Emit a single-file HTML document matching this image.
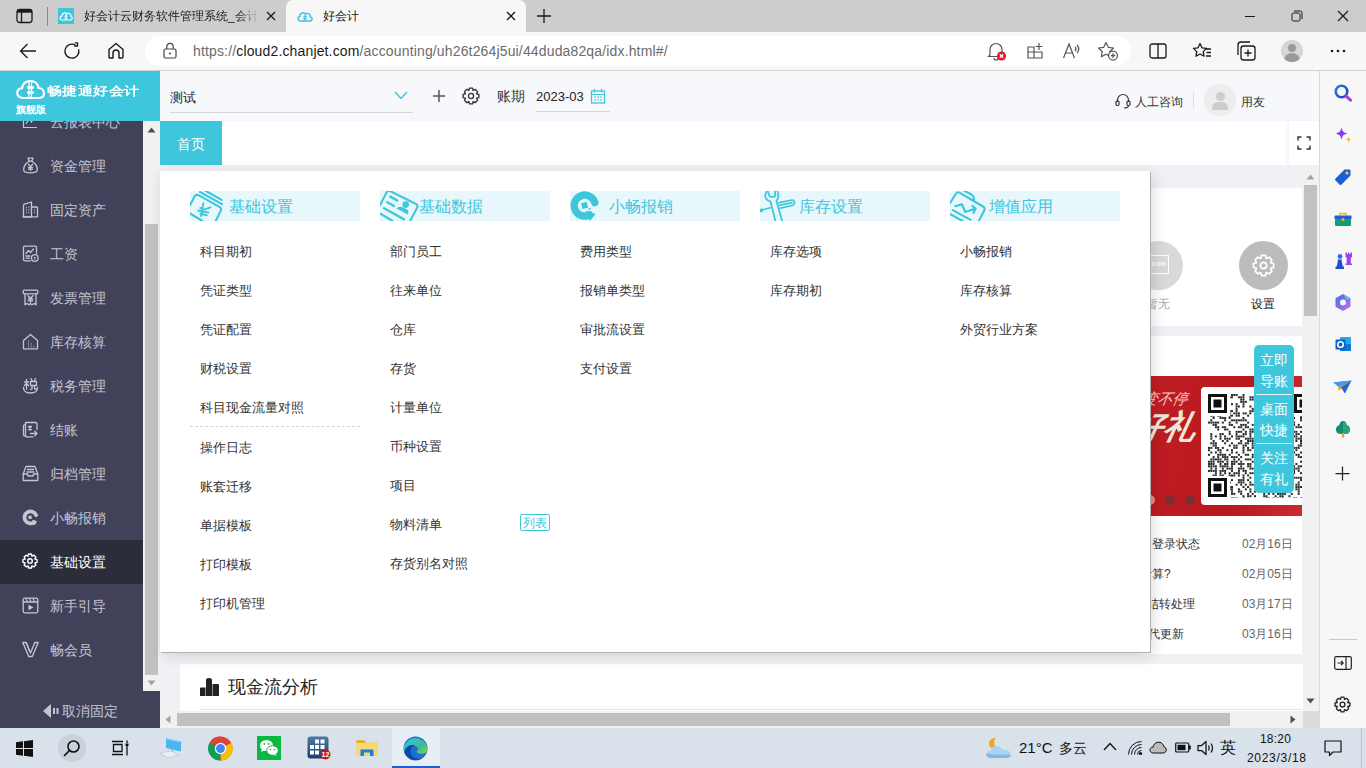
<!DOCTYPE html>
<html><head><meta charset="utf-8">
<style>
*{margin:0;padding:0;box-sizing:border-box}
html,body{width:1366px;height:768px;overflow:hidden;background:#fff;font-family:"Liberation Sans",sans-serif;position:relative}
.a{position:absolute}
svg{display:block}
/* browser chrome */
#tabs{left:0;top:0;width:1366px;height:32px;background:#cdcdcd}
#addr{left:0;top:32px;width:1366px;height:38px;background:#f7f7f7}
#url{left:145px;top:36px;width:986px;height:30px;background:#fff;border-radius:15px}
/* app */
#side{left:0;top:71px;width:143px;height:657px;background:#42415a}
#logo{left:0;top:71px;width:160px;height:50px;background:#3ec6dc}
#sscroll{left:143px;top:121px;width:17px;height:607px;background:#f1f1f1}
#hdr{left:160px;top:71px;width:1160px;height:50px;background:#f7f8fc}
#tabrow{left:160px;top:121px;width:1160px;height:44px;background:#fff}
#content{left:160px;top:165px;width:1160px;height:563px;background:#f0f1f4}
#drop{left:160px;top:171px;width:990px;height:481px;background:#fff;box-shadow:1px 1px 0 #aeaeae,3px 3px 14px rgba(0,0,0,.14)}
#taskbar{left:0;top:728px;width:1366px;height:40px;background:#d9e1ea}
#edge{left:1319px;top:71px;width:47px;height:658px;background:#f7f7f7;border-left:1px solid #d9d9d9}
.mi{left:0;width:143px;height:44px;color:#c8c8d0;font-size:14px;line-height:44px}
.mi span{position:absolute;left:50px;top:1px}
.mi svg{position:absolute;left:21.5px;top:13.5px}
.hd{width:170px;height:30px;top:191px;background:#e8f7fc;color:#3ec6dc;font-size:16px;line-height:30px}
.hd span{position:absolute;left:39px;top:1px}
.it{font-size:13px;color:#333;line-height:18px;height:18px}
</style></head><body>
<div id="tabs" class="a"></div>
<div id="addr" class="a"></div>
<div id="url" class="a"></div>
<div class="a" style="left:0;top:70px;width:1366px;height:1px;background:#d2d2d2"></div>
<!-- tab strip -->
<svg class="a" style="left:16px;top:8px" width="17" height="16" viewBox="0 0 17 16"><rect x="1" y="1.5" width="15" height="13" rx="2.5" fill="none" stroke="#1a1a1a" stroke-width="1.3"/><rect x="1" y="1.5" width="15" height="3.2" fill="#1a1a1a"/><line x1="5.5" y1="4" x2="5.5" y2="14" stroke="#1a1a1a" stroke-width="1.3"/></svg>
<div class="a" style="left:47px;top:7px;width:1px;height:19px;background:#8a8a8a"></div>
<div class="a" style="left:58px;top:8px;width:16px;height:16px;background:#3ec6dc"></div>
<svg class="a" style="left:58px;top:8px" width="16" height="16" viewBox="0 0 16 16"><path d="M4 12 C1.5 12 1.5 8.5 3.8 8.2 C3.8 5 7.5 4 9 6 C11 4.5 13.5 6 13 8.5 C15 9 14.5 12 12.5 12 Z" fill="none" stroke="#fff" stroke-width="1.2"/><path d="M8 6.5 V12 M6.5 8.5 L8 7.5 L9.5 8.5 M6.5 10.5 L8 9.5 L9.5 10.5" stroke="#fff" stroke-width="1" fill="none"/></svg>
<div class="a" style="left:84px;top:8px;width:175px;height:16px;overflow:hidden;white-space:nowrap;font-size:12px;line-height:16px;color:#1a1a1a;-webkit-mask-image:linear-gradient(90deg,#000 88%,transparent)">好会计云财务软件管理系统_会计</div>
<svg class="a" style="left:266px;top:11px" width="10" height="10" viewBox="0 0 10 10"><path d="M1 1L9 9M9 1L1 9" stroke="#1a1a1a" stroke-width="1.3"/></svg>
<div class="a" style="left:286px;top:0;width:240px;height:33px;background:#f7f7f7;border-radius:7px 7px 0 0"></div>
<svg class="a" style="left:296px;top:8px" width="18" height="16" viewBox="0 0 18 16"><path d="M4.5 13 C1.5 13 1.2 9 3.8 8.5 C3.8 4.8 8 3.5 9.8 6 C12 4.5 15 6.2 14.3 8.8 C16.8 9.3 16.5 13 13.8 13 Z" fill="none" stroke="#3ec6dc" stroke-width="1.5"/><path d="M9 6.5 V13 M7.3 9 L9 7.8 L10.7 9 M7.3 11.3 L9 10.1 L10.7 11.3" stroke="#3ec6dc" stroke-width="1.25" fill="none"/></svg>
<div class="a" style="left:323px;top:8px;font-size:12px;line-height:16px;color:#1a1a1a">好会计</div>
<svg class="a" style="left:506px;top:11px" width="10" height="10" viewBox="0 0 10 10"><path d="M1 1L9 9M9 1L1 9" stroke="#1a1a1a" stroke-width="1.3"/></svg>
<svg class="a" style="left:536px;top:8px" width="16" height="16" viewBox="0 0 16 16"><path d="M8 1V15M1 8H15" stroke="#1a1a1a" stroke-width="1.3"/></svg>
<svg class="a" style="left:1244px;top:11px" width="12" height="10" viewBox="0 0 12 10"><path d="M1 5.5H11" stroke="#1a1a1a" stroke-width="1"/></svg>
<svg class="a" style="left:1291px;top:10px" width="12" height="12" viewBox="0 0 12 12"><rect x="1" y="3" width="8" height="8" rx="1.5" fill="none" stroke="#1a1a1a" stroke-width="1"/><path d="M3 1H9.5A1.5 1.5 0 0 1 11 2.5V9" fill="none" stroke="#1a1a1a" stroke-width="1"/></svg>
<svg class="a" style="left:1337px;top:10px" width="12" height="12" viewBox="0 0 12 12"><path d="M1 1L11 11M11 1L1 11" stroke="#1a1a1a" stroke-width="1.25"/></svg>
<!-- address row -->
<svg class="a" style="left:19px;top:42px" width="18" height="18" viewBox="0 0 18 18"><path d="M17 9H2M8.5 2L1.5 9L8.5 16" fill="none" stroke="#1a1a1a" stroke-width="1.3"/></svg>
<svg class="a" style="left:63px;top:42px" width="18" height="18" viewBox="0 0 18 18"><path d="M15.6 7.2 A7 7 0 1 1 12.5 3.2" fill="none" stroke="#1a1a1a" stroke-width="1.3"/><path d="M11.8 0.8 H14.5 V4 H11.2" fill="none" stroke="#1a1a1a" stroke-width="1.3"/></svg>
<svg class="a" style="left:107px;top:42px" width="18" height="17" viewBox="0 0 18 17"><path d="M2 7.5 L9 1.5 L16 7.5 V15 A1 1 0 0 1 15 16 H12 V11 A3 3 0 0 0 6 11 V16 H3 A1 1 0 0 1 2 15 Z" fill="none" stroke="#1a1a1a" stroke-width="1.4" stroke-linejoin="round"/></svg>
<svg class="a" style="left:163px;top:42px" width="14" height="17" viewBox="0 0 14 17"><rect x="1" y="7" width="12" height="9" rx="1.5" fill="none" stroke="#444" stroke-width="1.2"/><path d="M3.8 7V4.5A3.2 3.2 0 0 1 10.2 4.5V7" fill="none" stroke="#444" stroke-width="1.2"/><circle cx="7" cy="11.5" r="1" fill="#444"/></svg>
<div class="a" style="left:193px;top:43px;font-size:14px;letter-spacing:0.15px;line-height:16px;color:#6b6b6b;white-space:nowrap">https://<span style="color:#1a1a1a">cloud2.chanjet.com</span>/accounting/uh26t264j5ui/44duda82qa/idx.html#/</div>
<!-- right address icons -->
<svg class="a" style="left:986px;top:41px" width="22" height="20" viewBox="0 0 22 20"><path d="M4 14 V8.5 A6 6 0 0 1 16 8.5 V14 L17.5 15.5 H2.5 Z" fill="none" stroke="#555" stroke-width="1.2"/><path d="M8 17 A2 2 0 0 0 12 17" fill="none" stroke="#555" stroke-width="1.2"/><circle cx="15.5" cy="15" r="4.5" fill="#e81123"/><path d="M13.8 13.3L17.2 16.7M17.2 13.3L13.8 16.7" stroke="#fff" stroke-width="1.25"/></svg>
<svg class="a" style="left:1026px;top:42px" width="18" height="18" viewBox="0 0 18 18"><path d="M2 5H8V16H2Z M8 10H16V16H8 M2 10H8" fill="none" stroke="#555" stroke-width="1.2"/><path d="M13 1V8M9.5 4.5H16.5" stroke="#555" stroke-width="1.2"/></svg>
<svg class="a" style="left:1062px;top:42px" width="20" height="18" viewBox="0 0 20 18"><path d="M1.5 16 L7 2 L12.5 16 M3.5 11H10.5" fill="none" stroke="#555" stroke-width="1.2"/><path d="M13 5 Q15 7 13 9 M15 3 Q18.5 7 15 11" fill="none" stroke="#555" stroke-width="1.25"/></svg>
<svg class="a" style="left:1097px;top:41px" width="22" height="20" viewBox="0 0 22 20"><path d="M9 1.5 L11.3 6.3 L16.5 7 L12.7 10.7 L13.6 15.8 L9 13.3 L4.4 15.8 L5.3 10.7 L1.5 7 L6.7 6.3 Z" fill="none" stroke="#555" stroke-width="1.2" stroke-linejoin="round"/><circle cx="16" cy="14.5" r="4.5" fill="#f7f7f7" stroke="#555" stroke-width="1.25"/><path d="M16 12.3V16.7M13.8 14.5H18.2" stroke="#555" stroke-width="1.25"/></svg>
<svg class="a" style="left:1149px;top:42px" width="18" height="18" viewBox="0 0 18 18"><rect x="1" y="2" width="16" height="14" rx="2" fill="none" stroke="#1a1a1a" stroke-width="1.3"/><path d="M9 2V16" stroke="#1a1a1a" stroke-width="1.3"/></svg>
<svg class="a" style="left:1192px;top:41px" width="20" height="20" viewBox="0 0 20 20"><path d="M8 2.5 L10 6.8 L14.6 7.4 L11.2 10.6 L12 15.2 L8 13 L4 15.2 L4.8 10.6 L1.4 7.4 L6 6.8 Z" fill="none" stroke="#1a1a1a" stroke-width="1.3" stroke-linejoin="round"/><path d="M13.5 8H19M14.5 11.5H19M14 15H19" stroke="#1a1a1a" stroke-width="1.3"/></svg>
<svg class="a" style="left:1236px;top:41px" width="20" height="20" viewBox="0 0 20 20"><rect x="5" y="5" width="14" height="14" rx="2.5" fill="none" stroke="#1a1a1a" stroke-width="1.3"/><path d="M2 14V4A3 3 0 0 1 5 1H14" fill="none" stroke="#1a1a1a" stroke-width="1.3"/><path d="M12 8.5V15.5M8.5 12H15.5" stroke="#1a1a1a" stroke-width="1.3"/></svg>
<div class="a" style="left:1281px;top:40px;width:22px;height:22px;border-radius:50%;background:#d6d6d6;overflow:hidden"><div class="a" style="left:7px;top:4px;width:8px;height:8px;border-radius:50%;background:#9a9a9a"></div><div class="a" style="left:3px;top:13px;width:16px;height:12px;border-radius:8px 8px 0 0;background:#9a9a9a"></div></div>
<svg class="a" style="left:1330px;top:49px" width="16" height="4" viewBox="0 0 16 4"><circle cx="2" cy="2" r="1.3" fill="#1a1a1a"/><circle cx="8" cy="2" r="1.3" fill="#1a1a1a"/><circle cx="14" cy="2" r="1.3" fill="#1a1a1a"/></svg>

<div id="side" class="a"></div>

<div class="a" style="left:0;top:691px;width:160px;height:37px;background:#42415a"></div>
<div class="a mi" style="top:99px;color:#c3c6d1"><svg width="16" height="16" viewBox="0 0 16 16"><path d="M1.5 2V14.5H15" fill="none" stroke="#c3c6d1" stroke-width="1.2"/><path d="M4 11L7 6L9.5 9L13 3" fill="none" stroke="#c3c6d1" stroke-width="1.2"/></svg><span>云报表中心</span></div><div class="a mi" style="top:143px;color:#c3c6d1"><svg width="17" height="17" viewBox="0 0 17 17"><path d="M6 1.2H11L9.8 4.2H7.2Z" fill="none" stroke="#c3c6d1" stroke-width="1.3" stroke-linejoin="round" stroke-linecap="round"/><path d="M7.2 4.2C3 6.5 1 10.5 1.8 13.5C2.4 15.4 4 15.8 8.5 15.8C13 15.8 14.6 15.4 15.2 13.5C16 10.5 14 6.5 9.8 4.2" fill="none" stroke="#c3c6d1" stroke-width="1.3" stroke-linejoin="round" stroke-linecap="round"/><path d="M6.3 7.3L8.5 9.8L10.7 7.3M8.5 9.8V13.6M6.5 10.6H10.5M6.5 12.2H10.5" fill="none" stroke="#c3c6d1" stroke-width="1.3" stroke-linejoin="round" stroke-linecap="round"/></svg><span>资金管理</span></div><div class="a mi" style="top:187px;color:#c3c6d1"><svg width="17" height="17" viewBox="0 0 17 17"><path d="M1.5 15.8V4.5Q1.5 3.5 2.5 3.2L9.5 1V15.8Z" fill="none" stroke="#c3c6d1" stroke-width="1.3" stroke-linejoin="round" stroke-linecap="round"/><path d="M9.5 6H14.5Q15.5 6 15.5 7V15.8H1" fill="none" stroke="#c3c6d1" stroke-width="1.3" stroke-linejoin="round" stroke-linecap="round"/><path d="M4 6.5H4.8M6.5 6.5H7.3M4 9H4.8M6.5 9H7.3M4 11.5H4.8M6.5 11.5H7.3M12 9H12.8M12 11.5H12.8" stroke="#c3c6d1" stroke-width="1.6"/></svg><span>固定资产</span></div><div class="a mi" style="top:231px;color:#c3c6d1"><svg width="17" height="17" viewBox="0 0 17 17"><path d="M14.5 8.5V2.5Q14.5 1.2 13.2 1.2H2.8Q1.5 1.2 1.5 2.5V14.5Q1.5 15.8 2.8 15.8H8.5" fill="none" stroke="#c3c6d1" stroke-width="1.3" stroke-linejoin="round" stroke-linecap="round"/><path d="M4 8.5L6.5 5.5L8.5 7.5L11.5 4 M4 11H8 M4 13.2H7.5" fill="none" stroke="#c3c6d1" stroke-width="1.3" stroke-linejoin="round" stroke-linecap="round"/><circle cx="12.8" cy="13" r="3.3" fill="none" stroke="#c3c6d1" stroke-width="1.3" stroke-linejoin="round" stroke-linecap="round"/><path d="M11.8 12L12.8 13L13.8 12M12.8 13V14.8" fill="none" stroke="#c3c6d1" stroke-width="1"/></svg><span>工资</span></div><div class="a mi" style="top:275px;color:#c3c6d1"><svg width="17" height="17" viewBox="0 0 17 17"><rect x="1.2" y="1.2" width="14.6" height="3.6" rx="1" fill="none" stroke="#c3c6d1" stroke-width="1.3" stroke-linejoin="round" stroke-linecap="round"/><path d="M3 4.8V15.8L5 14.5L7 15.8L8.5 14.5L10 15.8L12 14.5L14 15.8V4.8" fill="none" stroke="#c3c6d1" stroke-width="1.3" stroke-linejoin="round" stroke-linecap="round"/><path d="M6 6.8L8.5 9.3L11 6.8M8.5 9.3V13M6.3 10H10.7M6.3 11.8H10.7" fill="none" stroke="#c3c6d1" stroke-width="1.3" stroke-linejoin="round" stroke-linecap="round"/></svg><span>发票管理</span></div><div class="a mi" style="top:319px;color:#c3c6d1"><svg width="17" height="17" viewBox="0 0 17 17"><path d="M1.5 15.8V7.5L8.5 1.5L15.5 7.5V15.8Z" fill="none" stroke="#c3c6d1" stroke-width="1.3" stroke-linejoin="round" stroke-linecap="round"/><path d="M6 8.5H6.8M6 11H6.8M8.7 11H9.5M6 13.5H6.8M8.7 13.5H9.5M11.4 13.5H12.2" stroke="#c3c6d1" stroke-width="1.5"/></svg><span>库存核算</span></div><div class="a mi" style="top:363px;color:#c3c6d1"><svg width="17" height="17" viewBox="0 0 17 17"><path d="M1.5 10.5C1.5 14 4.5 16 8.5 16C12.5 16 15.5 14 15.5 10.5" fill="none" stroke="#c3c6d1" stroke-width="1.3" stroke-linejoin="round" stroke-linecap="round"/><path d="M2.5 5H6.5M4.5 2.5V12M2.5 8.5L4.5 6.5L6.5 8.5M9 1.5L10 3.5M13.5 1.5L12.5 3.5M8.5 4.5H14.5V8.5H8.5ZM10 8.5V12L8.5 12.5M12.5 8.5V11.5Q12.5 12.5 14.5 12" fill="none" stroke="#c3c6d1" stroke-width="1.3" stroke-linejoin="round" stroke-linecap="round"/></svg><span>税务管理</span></div><div class="a mi" style="top:407px;color:#c3c6d1"><svg width="17" height="17" viewBox="0 0 17 17"><path d="M3.5 1.5H13.5Q15 1.5 15 3V8.5M11 15.8H5Q3.5 15.8 3.5 14.3V1.5" fill="none" stroke="#c3c6d1" stroke-width="1.3" stroke-linejoin="round" stroke-linecap="round"/><path d="M3.5 3L1.5 4.5V13.5Q1.5 14.5 2.5 15" fill="none" stroke="#c3c6d1" stroke-width="1.3" stroke-linejoin="round" stroke-linecap="round"/><path d="M6.5 5.5L9.5 8.5M9.5 5.5L6.5 8.5M8 4.8V9.2" fill="none" stroke="#c3c6d1" stroke-width="1.3" stroke-linejoin="round" stroke-linecap="round"/><path d="M8.5 12.5H15M12.8 10.3L15 12.5L12.8 14.7" fill="none" stroke="#c3c6d1" stroke-width="1.3" stroke-linejoin="round" stroke-linecap="round"/></svg><span>结账</span></div><div class="a mi" style="top:451px;color:#c3c6d1"><svg width="17" height="17" viewBox="0 0 17 17"><path d="M4 1.5H13L15.8 9V15.5H1.2V9Z" fill="none" stroke="#c3c6d1" stroke-width="1.3" stroke-linejoin="round" stroke-linecap="round"/><path d="M1.2 9H5.5L6 11H11L11.5 9H15.8" fill="none" stroke="#c3c6d1" stroke-width="1.3" stroke-linejoin="round" stroke-linecap="round"/><path d="M5.5 4.5H11.5M5 7H12" fill="none" stroke="#c3c6d1" stroke-width="1.3" stroke-linejoin="round" stroke-linecap="round"/></svg><span>归档管理</span></div><div class="a mi" style="top:495px;color:#c3c6d1"><svg width="17" height="17" viewBox="0 0 17 17"><path d="M14 6 A6 6 0 1 0 12.2 13.2" fill="none" stroke="#c3c6d1" stroke-width="3.8" stroke-linecap="round"/><path d="M10 10.8 L15 12.3 L12.7 16.5Z" fill="#c3c6d1"/><path d="M6.2 7 L9.4 6.4 L10 9.6 L6.8 10.2Z" fill="#c3c6d1"/></svg><span>小畅报销</span></div><div class="a" style="left:0;top:540px;width:143px;height:44px;background:#2c2d3b"></div><div class="a mi" style="top:539px;color:#fff"><svg width="16" height="16" viewBox="0 0 16 16"><path d="M6.6 1H9.4L9.9 3.1L11.9 2.2L13.8 4.1L12.9 6.1L15 6.6V9.4L12.9 9.9L13.8 11.9L11.9 13.8L9.9 12.9L9.4 15H6.6L6.1 12.9L4.1 13.8L2.2 11.9L3.1 9.9L1 9.4V6.6L3.1 6.1L2.2 4.1L4.1 2.2L6.1 3.1Z" fill="none" stroke="#fff" stroke-width="1.4" stroke-linejoin="round"/><circle cx="8" cy="8" r="2.3" fill="none" stroke="#fff" stroke-width="1.4"/></svg><span>基础设置</span></div><div class="a mi" style="top:583px;color:#c3c6d1"><svg width="17" height="17" viewBox="0 0 17 17"><rect x="1.2" y="1.2" width="14.6" height="14.6" rx="1.5" fill="none" stroke="#c3c6d1" stroke-width="1.3" stroke-linejoin="round" stroke-linecap="round"/><path d="M1.2 5H15.8" fill="none" stroke="#c3c6d1" stroke-width="1.3" stroke-linejoin="round" stroke-linecap="round"/><path d="M4 1.5L5.5 4.7M7.5 1.5L9 4.7M11 1.5L12.5 4.7" stroke="#c3c6d1" stroke-width="1.2"/><path d="M6.5 7.5V13.3L11.5 10.4Z" fill="#c3c6d1"/></svg><span>新手引导</span></div><div class="a mi" style="top:627px;color:#c3c6d1"><svg width="17" height="17" viewBox="0 0 17 17"><path d="M0.8 1.5H4.2L8.5 12L12.8 1.5H16.2L10.3 15.5H6.7Z" fill="none" stroke="#c3c6d1" stroke-width="1.3" stroke-linejoin="round" stroke-linecap="round"/><path d="M4.2 1.5L7.8 10.8" fill="none" stroke="#c3c6d1" stroke-width="1.1"/></svg><span>畅会员</span></div>
<div class="a" style="left:143px;top:121px;width:17px;height:570px;background:#f1f1f1"></div>
<svg class="a" style="left:147px;top:127px" width="9" height="6" viewBox="0 0 9 6"><path d="M0.5 5.5L4.5 0.5L8.5 5.5Z" fill="#505050"/></svg>
<div class="a" style="left:145px;top:224px;width:13px;height:451px;background:#c1c1c1"></div>
<svg class="a" style="left:147px;top:680px" width="9" height="6" viewBox="0 0 9 6"><path d="M0.5 0.5L4.5 5.5L8.5 0.5Z" fill="#a3a3a3"/></svg>
<div class="a" style="left:0;top:691px;width:160px;height:37px;background:#42415a"></div>
<svg class="a" style="left:42px;top:703px" width="18" height="16" viewBox="0 0 18 16"><path d="M9 1V15L1 8Z" fill="#c3c6d1"/><rect x="11" y="5" width="2" height="6" fill="#c3c6d1"/><rect x="14.5" y="5" width="2" height="6" fill="#c3c6d1"/></svg>
<div class="a" style="left:62px;top:702px;font-size:14px;line-height:18px;color:#c3c6d1">取消固定</div>

<div id="logo" class="a"></div>
<svg class="a" style="left:16px;top:80px" width="29" height="19" viewBox="0 0 29 19"><path d="M8 18C3 18 1.2 15.5 1.2 12.8C1.2 10 3.5 8 6 8.2C6.8 3.5 10.2 1 14.5 1C19 1 22 4 22.5 8C25.8 8 28 10.3 28 13.3C28 16 26 18 22.5 18Z" fill="none" stroke="#fff" stroke-width="2.1"/><path d="M13 1.5V18M15.5 1.5V18" stroke="#fff" stroke-width="1.2"/><rect x="11" y="6" width="7" height="3" rx="1.5" fill="#fff"/><rect x="11" y="11" width="7" height="3" rx="1.5" fill="#fff"/></svg>
<div class="a" style="left:47px;top:82px;font-size:15px;line-height:18px;color:#fff;font-weight:bold;letter-spacing:0.4px;transform:scaleY(0.8);transform-origin:0 50%">畅捷通好会计</div>
<div class="a" style="left:16px;top:103px;font-size:10px;line-height:13px;color:#fff;font-weight:bold">旗舰版</div>

<div id="hdr" class="a"></div>
<div id="tabrow" class="a"></div>
<div class="a" style="left:170px;top:89px;font-size:13px;line-height:17px;color:#222">测试</div>
<svg class="a" style="left:394px;top:91px" width="14" height="9" viewBox="0 0 14 9"><path d="M1 1L7 7.5L13 1" fill="none" stroke="#3ec6dc" stroke-width="1.5"/></svg>
<div class="a" style="left:170px;top:112px;width:243px;height:1px;background:#d6d8dc"></div>
<svg class="a" style="left:432px;top:89px" width="14" height="14" viewBox="0 0 14 14"><path d="M7 1V13M1 7H13" stroke="#555" stroke-width="1.5"/></svg>
<svg class="a" style="left:462px;top:87px" width="18" height="18" viewBox="0 0 16 16"><path d="M6.6 1H9.4L9.9 3.1L11.9 2.2L13.8 4.1L12.9 6.1L15 6.6V9.4L12.9 9.9L13.8 11.9L11.9 13.8L9.9 12.9L9.4 15H6.6L6.1 12.9L4.1 13.8L2.2 11.9L3.1 9.9L1 9.4V6.6L3.1 6.1L2.2 4.1L4.1 2.2L6.1 3.1Z" fill="none" stroke="#333" stroke-width="1.2" stroke-linejoin="round"/><circle cx="8" cy="8" r="2.3" fill="none" stroke="#333" stroke-width="1.2"/></svg>
<div class="a" style="left:497px;top:87px;font-size:14px;line-height:18px;color:#333">账期</div>
<div class="a" style="left:536px;top:88px;font-size:13px;line-height:17px;color:#222">2023-03</div>
<svg class="a" style="left:590px;top:88px" width="16" height="16" viewBox="0 0 16 16"><rect x="1.5" y="3" width="13" height="12" fill="none" stroke="#3ec6dc" stroke-width="1.3"/><path d="M1.5 6.5H14.5M4.5 1V4.5M11.5 1V4.5M4 9H6M7 9H9M10 9H12M4 12H6M7 12H9M10 12H12" stroke="#3ec6dc" stroke-width="1.2"/></svg>
<div class="a" style="left:536px;top:111px;width:74px;height:1px;background:#d6d8dc"></div>
<svg class="a" style="left:1115px;top:93px" width="16" height="16" viewBox="0 0 16 16"><path d="M2.5 9V7A5.5 5.5 0 0 1 13.5 7V9" fill="none" stroke="#333" stroke-width="1.2"/><rect x="1" y="8" width="3" height="4.5" rx="1.2" fill="none" stroke="#333" stroke-width="1.2"/><rect x="12" y="8" width="3" height="4.5" rx="1.2" fill="none" stroke="#333" stroke-width="1.2"/><path d="M13.5 12.5C13.5 14 12 15 9 15" fill="none" stroke="#333" stroke-width="1.2"/></svg>
<div class="a" style="left:1135px;top:94px;font-size:12px;line-height:16px;color:#333">人工咨询</div>
<div class="a" style="left:1193px;top:92px;width:1px;height:16px;background:#dcdcdc"></div>
<div class="a" style="left:1204px;top:84px;width:32px;height:32px;border-radius:50%;background:#ededed;overflow:hidden"><div class="a" style="left:11.5px;top:8px;width:9px;height:9px;border-radius:50%;background:#cdcdcd"></div><div class="a" style="left:8px;top:17.5px;width:16px;height:8px;border-radius:6px 6px 1px 1px;background:#cdcdcd"></div></div>
<div class="a" style="left:1241px;top:94px;font-size:12px;line-height:16px;color:#333">用友</div>
<!-- tab row -->
<div class="a" style="left:160px;top:121px;width:62px;height:44px;background:#3ec6dc"></div>
<div class="a" style="left:177px;top:135px;font-size:14px;line-height:18px;color:#fff">首页</div>
<div class="a" style="left:160px;top:165px;width:1160px;height:6px;background:linear-gradient(#fcfcfc,#f4f4f5 45%,#dcdde0)"></div>
<div class="a" style="left:1289px;top:121px;width:31px;height:44px;background:#fff;box-shadow:-2px 0 3px rgba(0,0,0,.05)"></div>
<svg class="a" style="left:1297px;top:136px" width="14" height="14" viewBox="0 0 14 14"><path d="M1 4.5V1H4.5M9.5 1H13V4.5M13 9.5V13H9.5M4.5 13H1V9.5" fill="none" stroke="#333" stroke-width="1.4"/></svg>

<div id="content" class="a"></div>
<!-- vertical scrollbar of content -->
<div class="a" style="left:1303px;top:170px;width:16px;height:541px;background:#f1f1f1"></div>
<svg class="a" style="left:1306px;top:174px" width="9" height="6" viewBox="0 0 9 6"><path d="M0.5 5.5L4.5 0.5L8.5 5.5Z" fill="#a3a3a3"/></svg>
<div class="a" style="left:1304px;top:185px;width:13px;height:131px;background:#c1c1c1"></div>
<svg class="a" style="left:1306px;top:698px" width="9" height="6" viewBox="0 0 9 6"><path d="M0.5 0.5L4.5 5.5L8.5 0.5Z" fill="#505050"/></svg>
<!-- card 1 -->
<div class="a" style="left:1140px;top:188px;width:162px;height:138px;background:#fff"></div>
<div class="a" style="left:1134px;top:241px;width:49px;height:49px;border-radius:50%;background:#d9d9d9"></div>
<div class="a" style="left:1147px;top:255px;width:22px;height:19px;border:1.5px solid #fff"></div>
<div class="a" style="left:1149px;top:258px;font-size:8px;line-height:12px;color:#fff;font-weight:bold">icon</div>
<div class="a" style="left:1146px;top:296px;font-size:12px;line-height:16px;color:#aaa">暂无</div>
<div class="a" style="left:1239px;top:241px;width:49px;height:49px;border-radius:50%;background:#bcbcbc"></div>
<svg class="a" style="left:1252px;top:254px" width="23" height="23" viewBox="0 0 16 16"><path d="M6.6 1H9.4L9.9 3.1L11.9 2.2L13.8 4.1L12.9 6.1L15 6.6V9.4L12.9 9.9L13.8 11.9L11.9 13.8L9.9 12.9L9.4 15H6.6L6.1 12.9L4.1 13.8L2.2 11.9L3.1 9.9L1 9.4V6.6L3.1 6.1L2.2 4.1L4.1 2.2L6.1 3.1Z" fill="none" stroke="#fff" stroke-width="1.2" stroke-linejoin="round"/><circle cx="8" cy="8" r="2.2" fill="none" stroke="#fff" stroke-width="1.2"/></svg>
<div class="a" style="left:1251px;top:296px;font-size:12px;line-height:16px;color:#111">设置</div>
<!-- card 2 -->
<div class="a" style="left:1140px;top:336px;width:162px;height:318px;background:#fff"></div>
<div class="a" style="left:1140px;top:376px;width:162px;height:140px;background:linear-gradient(100deg,#c01e24 0%,#b8181e 60%,#cc2a30 100%);overflow:hidden">
  <div class="a" style="left:3px;top:14px;font-size:15px;line-height:18px;color:#f0d2cf;font-style:italic;transform:skewX(-10deg)">变不停</div>
  <div class="a" style="left:-10px;top:32px;font-size:33px;line-height:38px;color:#ece9dc;font-weight:bold;font-style:italic;transform:skewX(-12deg)">好礼</div>
  <div class="a" style="left:5px;top:119px;width:10px;height:10px;border-radius:50%;background:#e88a8a"></div>
  <div class="a" style="left:25px;top:119px;width:10px;height:10px;border-radius:50%;background:#7d2e33"></div>
  <div class="a" style="left:45px;top:119px;width:10px;height:10px;border-radius:50%;background:#7d2e33"></div>
  <div class="a" style="left:61px;top:11px;width:120px;height:118px;background:#fff;border-radius:4px"></div>
  <svg class="a" style="left:68px;top:18px" width="110" height="104" viewBox="0 0 110 104"><g fill="#2a2a2a"><rect x="13.8" y="0.0" width="2.0" height="2.0"/><rect x="23.0" y="0.0" width="2.0" height="2.0"/><rect x="25.3" y="0.0" width="2.0" height="2.0"/><rect x="27.6" y="0.0" width="2.0" height="2.0"/><rect x="34.5" y="0.0" width="2.0" height="2.0"/><rect x="46.0" y="0.0" width="2.0" height="2.0"/><rect x="48.3" y="0.0" width="2.0" height="2.0"/><rect x="52.9" y="0.0" width="2.0" height="2.0"/><rect x="55.2" y="0.0" width="2.0" height="2.0"/><rect x="57.5" y="0.0" width="2.0" height="2.0"/><rect x="59.8" y="0.0" width="2.0" height="2.0"/><rect x="80.5" y="0.0" width="2.0" height="2.0"/><rect x="92.0" y="0.0" width="2.0" height="2.0"/><rect x="94.3" y="0.0" width="2.0" height="2.0"/><rect x="96.6" y="0.0" width="2.0" height="2.0"/><rect x="98.9" y="0.0" width="2.0" height="2.0"/><rect x="103.5" y="0.0" width="2.0" height="2.0"/><rect x="2.3" y="2.3" width="2.0" height="2.0"/><rect x="9.2" y="2.3" width="2.0" height="2.0"/><rect x="11.5" y="2.3" width="2.0" height="2.0"/><rect x="20.7" y="2.3" width="2.0" height="2.0"/><rect x="23.0" y="2.3" width="2.0" height="2.0"/><rect x="29.9" y="2.3" width="2.0" height="2.0"/><rect x="32.2" y="2.3" width="2.0" height="2.0"/><rect x="34.5" y="2.3" width="2.0" height="2.0"/><rect x="41.4" y="2.3" width="2.0" height="2.0"/><rect x="43.7" y="2.3" width="2.0" height="2.0"/><rect x="46.0" y="2.3" width="2.0" height="2.0"/><rect x="48.3" y="2.3" width="2.0" height="2.0"/><rect x="52.9" y="2.3" width="2.0" height="2.0"/><rect x="59.8" y="2.3" width="2.0" height="2.0"/><rect x="64.4" y="2.3" width="2.0" height="2.0"/><rect x="69.0" y="2.3" width="2.0" height="2.0"/><rect x="73.6" y="2.3" width="2.0" height="2.0"/><rect x="75.9" y="2.3" width="2.0" height="2.0"/><rect x="82.8" y="2.3" width="2.0" height="2.0"/><rect x="87.4" y="2.3" width="2.0" height="2.0"/><rect x="89.7" y="2.3" width="2.0" height="2.0"/><rect x="96.6" y="2.3" width="2.0" height="2.0"/><rect x="101.2" y="2.3" width="2.0" height="2.0"/><rect x="103.5" y="2.3" width="2.0" height="2.0"/><rect x="2.3" y="4.6" width="2.0" height="2.0"/><rect x="4.6" y="4.6" width="2.0" height="2.0"/><rect x="6.9" y="4.6" width="2.0" height="2.0"/><rect x="9.2" y="4.6" width="2.0" height="2.0"/><rect x="13.8" y="4.6" width="2.0" height="2.0"/><rect x="18.4" y="4.6" width="2.0" height="2.0"/><rect x="32.2" y="4.6" width="2.0" height="2.0"/><rect x="34.5" y="4.6" width="2.0" height="2.0"/><rect x="41.4" y="4.6" width="2.0" height="2.0"/><rect x="43.7" y="4.6" width="2.0" height="2.0"/><rect x="50.6" y="4.6" width="2.0" height="2.0"/><rect x="62.1" y="4.6" width="2.0" height="2.0"/><rect x="64.4" y="4.6" width="2.0" height="2.0"/><rect x="69.0" y="4.6" width="2.0" height="2.0"/><rect x="73.6" y="4.6" width="2.0" height="2.0"/><rect x="80.5" y="4.6" width="2.0" height="2.0"/><rect x="82.8" y="4.6" width="2.0" height="2.0"/><rect x="87.4" y="4.6" width="2.0" height="2.0"/><rect x="89.7" y="4.6" width="2.0" height="2.0"/><rect x="98.9" y="4.6" width="2.0" height="2.0"/><rect x="103.5" y="4.6" width="2.0" height="2.0"/><rect x="0.0" y="6.9" width="2.0" height="2.0"/><rect x="2.3" y="6.9" width="2.0" height="2.0"/><rect x="6.9" y="6.9" width="2.0" height="2.0"/><rect x="9.2" y="6.9" width="2.0" height="2.0"/><rect x="11.5" y="6.9" width="2.0" height="2.0"/><rect x="16.1" y="6.9" width="2.0" height="2.0"/><rect x="18.4" y="6.9" width="2.0" height="2.0"/><rect x="32.2" y="6.9" width="2.0" height="2.0"/><rect x="34.5" y="6.9" width="2.0" height="2.0"/><rect x="36.8" y="6.9" width="2.0" height="2.0"/><rect x="46.0" y="6.9" width="2.0" height="2.0"/><rect x="55.2" y="6.9" width="2.0" height="2.0"/><rect x="59.8" y="6.9" width="2.0" height="2.0"/><rect x="78.2" y="6.9" width="2.0" height="2.0"/><rect x="87.4" y="6.9" width="2.0" height="2.0"/><rect x="98.9" y="6.9" width="2.0" height="2.0"/><rect x="0.0" y="9.2" width="2.0" height="2.0"/><rect x="11.5" y="9.2" width="2.0" height="2.0"/><rect x="23.0" y="9.2" width="2.0" height="2.0"/><rect x="27.6" y="9.2" width="2.0" height="2.0"/><rect x="34.5" y="9.2" width="2.0" height="2.0"/><rect x="46.0" y="9.2" width="2.0" height="2.0"/><rect x="48.3" y="9.2" width="2.0" height="2.0"/><rect x="50.6" y="9.2" width="2.0" height="2.0"/><rect x="55.2" y="9.2" width="2.0" height="2.0"/><rect x="57.5" y="9.2" width="2.0" height="2.0"/><rect x="69.0" y="9.2" width="2.0" height="2.0"/><rect x="73.6" y="9.2" width="2.0" height="2.0"/><rect x="85.1" y="9.2" width="2.0" height="2.0"/><rect x="89.7" y="9.2" width="2.0" height="2.0"/><rect x="92.0" y="9.2" width="2.0" height="2.0"/><rect x="0.0" y="11.5" width="2.0" height="2.0"/><rect x="2.3" y="11.5" width="2.0" height="2.0"/><rect x="6.9" y="11.5" width="2.0" height="2.0"/><rect x="9.2" y="11.5" width="2.0" height="2.0"/><rect x="11.5" y="11.5" width="2.0" height="2.0"/><rect x="18.4" y="11.5" width="2.0" height="2.0"/><rect x="27.6" y="11.5" width="2.0" height="2.0"/><rect x="29.9" y="11.5" width="2.0" height="2.0"/><rect x="34.5" y="11.5" width="2.0" height="2.0"/><rect x="41.4" y="11.5" width="2.0" height="2.0"/><rect x="46.0" y="11.5" width="2.0" height="2.0"/><rect x="48.3" y="11.5" width="2.0" height="2.0"/><rect x="52.9" y="11.5" width="2.0" height="2.0"/><rect x="57.5" y="11.5" width="2.0" height="2.0"/><rect x="59.8" y="11.5" width="2.0" height="2.0"/><rect x="62.1" y="11.5" width="2.0" height="2.0"/><rect x="80.5" y="11.5" width="2.0" height="2.0"/><rect x="85.1" y="11.5" width="2.0" height="2.0"/><rect x="87.4" y="11.5" width="2.0" height="2.0"/><rect x="94.3" y="11.5" width="2.0" height="2.0"/><rect x="96.6" y="11.5" width="2.0" height="2.0"/><rect x="98.9" y="11.5" width="2.0" height="2.0"/><rect x="4.6" y="13.8" width="2.0" height="2.0"/><rect x="11.5" y="13.8" width="2.0" height="2.0"/><rect x="18.4" y="13.8" width="2.0" height="2.0"/><rect x="27.6" y="13.8" width="2.0" height="2.0"/><rect x="43.7" y="13.8" width="2.0" height="2.0"/><rect x="55.2" y="13.8" width="2.0" height="2.0"/><rect x="69.0" y="13.8" width="2.0" height="2.0"/><rect x="75.9" y="13.8" width="2.0" height="2.0"/><rect x="78.2" y="13.8" width="2.0" height="2.0"/><rect x="89.7" y="13.8" width="2.0" height="2.0"/><rect x="94.3" y="13.8" width="2.0" height="2.0"/><rect x="98.9" y="13.8" width="2.0" height="2.0"/><rect x="101.2" y="13.8" width="2.0" height="2.0"/><rect x="0.0" y="16.1" width="2.0" height="2.0"/><rect x="2.3" y="16.1" width="2.0" height="2.0"/><rect x="20.7" y="16.1" width="2.0" height="2.0"/><rect x="23.0" y="16.1" width="2.0" height="2.0"/><rect x="27.6" y="16.1" width="2.0" height="2.0"/><rect x="41.4" y="16.1" width="2.0" height="2.0"/><rect x="43.7" y="16.1" width="2.0" height="2.0"/><rect x="50.6" y="16.1" width="2.0" height="2.0"/><rect x="62.1" y="16.1" width="2.0" height="2.0"/><rect x="71.3" y="16.1" width="2.0" height="2.0"/><rect x="78.2" y="16.1" width="2.0" height="2.0"/><rect x="89.7" y="16.1" width="2.0" height="2.0"/><rect x="94.3" y="16.1" width="2.0" height="2.0"/><rect x="101.2" y="16.1" width="2.0" height="2.0"/><rect x="0.0" y="18.4" width="2.0" height="2.0"/><rect x="11.5" y="18.4" width="2.0" height="2.0"/><rect x="13.8" y="18.4" width="2.0" height="2.0"/><rect x="20.7" y="18.4" width="2.0" height="2.0"/><rect x="25.3" y="18.4" width="2.0" height="2.0"/><rect x="27.6" y="18.4" width="2.0" height="2.0"/><rect x="29.9" y="18.4" width="2.0" height="2.0"/><rect x="34.5" y="18.4" width="2.0" height="2.0"/><rect x="36.8" y="18.4" width="2.0" height="2.0"/><rect x="41.4" y="18.4" width="2.0" height="2.0"/><rect x="46.0" y="18.4" width="2.0" height="2.0"/><rect x="50.6" y="18.4" width="2.0" height="2.0"/><rect x="52.9" y="18.4" width="2.0" height="2.0"/><rect x="59.8" y="18.4" width="2.0" height="2.0"/><rect x="62.1" y="18.4" width="2.0" height="2.0"/><rect x="66.7" y="18.4" width="2.0" height="2.0"/><rect x="69.0" y="18.4" width="2.0" height="2.0"/><rect x="85.1" y="18.4" width="2.0" height="2.0"/><rect x="94.3" y="18.4" width="2.0" height="2.0"/><rect x="96.6" y="18.4" width="2.0" height="2.0"/><rect x="101.2" y="18.4" width="2.0" height="2.0"/><rect x="2.3" y="20.7" width="2.0" height="2.0"/><rect x="4.6" y="20.7" width="2.0" height="2.0"/><rect x="9.2" y="20.7" width="2.0" height="2.0"/><rect x="11.5" y="20.7" width="2.0" height="2.0"/><rect x="20.7" y="20.7" width="2.0" height="2.0"/><rect x="23.0" y="20.7" width="2.0" height="2.0"/><rect x="27.6" y="20.7" width="2.0" height="2.0"/><rect x="29.9" y="20.7" width="2.0" height="2.0"/><rect x="39.1" y="20.7" width="2.0" height="2.0"/><rect x="50.6" y="20.7" width="2.0" height="2.0"/><rect x="52.9" y="20.7" width="2.0" height="2.0"/><rect x="55.2" y="20.7" width="2.0" height="2.0"/><rect x="57.5" y="20.7" width="2.0" height="2.0"/><rect x="66.7" y="20.7" width="2.0" height="2.0"/><rect x="69.0" y="20.7" width="2.0" height="2.0"/><rect x="71.3" y="20.7" width="2.0" height="2.0"/><rect x="80.5" y="20.7" width="2.0" height="2.0"/><rect x="82.8" y="20.7" width="2.0" height="2.0"/><rect x="92.0" y="20.7" width="2.0" height="2.0"/><rect x="103.5" y="20.7" width="2.0" height="2.0"/><rect x="4.6" y="23.0" width="2.0" height="2.0"/><rect x="11.5" y="23.0" width="2.0" height="2.0"/><rect x="13.8" y="23.0" width="2.0" height="2.0"/><rect x="16.1" y="23.0" width="2.0" height="2.0"/><rect x="20.7" y="23.0" width="2.0" height="2.0"/><rect x="34.5" y="23.0" width="2.0" height="2.0"/><rect x="46.0" y="23.0" width="2.0" height="2.0"/><rect x="57.5" y="23.0" width="2.0" height="2.0"/><rect x="71.3" y="23.0" width="2.0" height="2.0"/><rect x="75.9" y="23.0" width="2.0" height="2.0"/><rect x="78.2" y="23.0" width="2.0" height="2.0"/><rect x="82.8" y="23.0" width="2.0" height="2.0"/><rect x="85.1" y="23.0" width="2.0" height="2.0"/><rect x="92.0" y="23.0" width="2.0" height="2.0"/><rect x="98.9" y="23.0" width="2.0" height="2.0"/><rect x="2.3" y="25.3" width="2.0" height="2.0"/><rect x="16.1" y="25.3" width="2.0" height="2.0"/><rect x="23.0" y="25.3" width="2.0" height="2.0"/><rect x="25.3" y="25.3" width="2.0" height="2.0"/><rect x="27.6" y="25.3" width="2.0" height="2.0"/><rect x="29.9" y="25.3" width="2.0" height="2.0"/><rect x="32.2" y="25.3" width="2.0" height="2.0"/><rect x="34.5" y="25.3" width="2.0" height="2.0"/><rect x="36.8" y="25.3" width="2.0" height="2.0"/><rect x="57.5" y="25.3" width="2.0" height="2.0"/><rect x="64.4" y="25.3" width="2.0" height="2.0"/><rect x="69.0" y="25.3" width="2.0" height="2.0"/><rect x="73.6" y="25.3" width="2.0" height="2.0"/><rect x="80.5" y="25.3" width="2.0" height="2.0"/><rect x="92.0" y="25.3" width="2.0" height="2.0"/><rect x="94.3" y="25.3" width="2.0" height="2.0"/><rect x="101.2" y="25.3" width="2.0" height="2.0"/><rect x="0.0" y="27.6" width="2.0" height="2.0"/><rect x="2.3" y="27.6" width="2.0" height="2.0"/><rect x="4.6" y="27.6" width="2.0" height="2.0"/><rect x="6.9" y="27.6" width="2.0" height="2.0"/><rect x="9.2" y="27.6" width="2.0" height="2.0"/><rect x="13.8" y="27.6" width="2.0" height="2.0"/><rect x="20.7" y="27.6" width="2.0" height="2.0"/><rect x="27.6" y="27.6" width="2.0" height="2.0"/><rect x="39.1" y="27.6" width="2.0" height="2.0"/><rect x="57.5" y="27.6" width="2.0" height="2.0"/><rect x="64.4" y="27.6" width="2.0" height="2.0"/><rect x="66.7" y="27.6" width="2.0" height="2.0"/><rect x="71.3" y="27.6" width="2.0" height="2.0"/><rect x="80.5" y="27.6" width="2.0" height="2.0"/><rect x="85.1" y="27.6" width="2.0" height="2.0"/><rect x="98.9" y="27.6" width="2.0" height="2.0"/><rect x="101.2" y="27.6" width="2.0" height="2.0"/><rect x="4.6" y="29.9" width="2.0" height="2.0"/><rect x="6.9" y="29.9" width="2.0" height="2.0"/><rect x="20.7" y="29.9" width="2.0" height="2.0"/><rect x="23.0" y="29.9" width="2.0" height="2.0"/><rect x="32.2" y="29.9" width="2.0" height="2.0"/><rect x="34.5" y="29.9" width="2.0" height="2.0"/><rect x="36.8" y="29.9" width="2.0" height="2.0"/><rect x="43.7" y="29.9" width="2.0" height="2.0"/><rect x="48.3" y="29.9" width="2.0" height="2.0"/><rect x="50.6" y="29.9" width="2.0" height="2.0"/><rect x="59.8" y="29.9" width="2.0" height="2.0"/><rect x="64.4" y="29.9" width="2.0" height="2.0"/><rect x="66.7" y="29.9" width="2.0" height="2.0"/><rect x="73.6" y="29.9" width="2.0" height="2.0"/><rect x="75.9" y="29.9" width="2.0" height="2.0"/><rect x="85.1" y="29.9" width="2.0" height="2.0"/><rect x="89.7" y="29.9" width="2.0" height="2.0"/><rect x="94.3" y="29.9" width="2.0" height="2.0"/><rect x="101.2" y="29.9" width="2.0" height="2.0"/><rect x="6.9" y="32.2" width="2.0" height="2.0"/><rect x="9.2" y="32.2" width="2.0" height="2.0"/><rect x="13.8" y="32.2" width="2.0" height="2.0"/><rect x="16.1" y="32.2" width="2.0" height="2.0"/><rect x="25.3" y="32.2" width="2.0" height="2.0"/><rect x="29.9" y="32.2" width="2.0" height="2.0"/><rect x="32.2" y="32.2" width="2.0" height="2.0"/><rect x="36.8" y="32.2" width="2.0" height="2.0"/><rect x="39.1" y="32.2" width="2.0" height="2.0"/><rect x="46.0" y="32.2" width="2.0" height="2.0"/><rect x="48.3" y="32.2" width="2.0" height="2.0"/><rect x="50.6" y="32.2" width="2.0" height="2.0"/><rect x="55.2" y="32.2" width="2.0" height="2.0"/><rect x="57.5" y="32.2" width="2.0" height="2.0"/><rect x="75.9" y="32.2" width="2.0" height="2.0"/><rect x="78.2" y="32.2" width="2.0" height="2.0"/><rect x="80.5" y="32.2" width="2.0" height="2.0"/><rect x="87.4" y="32.2" width="2.0" height="2.0"/><rect x="89.7" y="32.2" width="2.0" height="2.0"/><rect x="92.0" y="32.2" width="2.0" height="2.0"/><rect x="94.3" y="32.2" width="2.0" height="2.0"/><rect x="96.6" y="32.2" width="2.0" height="2.0"/><rect x="98.9" y="32.2" width="2.0" height="2.0"/><rect x="101.2" y="32.2" width="2.0" height="2.0"/><rect x="9.2" y="34.5" width="2.0" height="2.0"/><rect x="16.1" y="34.5" width="2.0" height="2.0"/><rect x="18.4" y="34.5" width="2.0" height="2.0"/><rect x="34.5" y="34.5" width="2.0" height="2.0"/><rect x="41.4" y="34.5" width="2.0" height="2.0"/><rect x="43.7" y="34.5" width="2.0" height="2.0"/><rect x="50.6" y="34.5" width="2.0" height="2.0"/><rect x="55.2" y="34.5" width="2.0" height="2.0"/><rect x="62.1" y="34.5" width="2.0" height="2.0"/><rect x="64.4" y="34.5" width="2.0" height="2.0"/><rect x="73.6" y="34.5" width="2.0" height="2.0"/><rect x="75.9" y="34.5" width="2.0" height="2.0"/><rect x="94.3" y="34.5" width="2.0" height="2.0"/><rect x="20.7" y="36.8" width="2.0" height="2.0"/><rect x="27.6" y="36.8" width="2.0" height="2.0"/><rect x="29.9" y="36.8" width="2.0" height="2.0"/><rect x="32.2" y="36.8" width="2.0" height="2.0"/><rect x="36.8" y="36.8" width="2.0" height="2.0"/><rect x="41.4" y="36.8" width="2.0" height="2.0"/><rect x="43.7" y="36.8" width="2.0" height="2.0"/><rect x="46.0" y="36.8" width="2.0" height="2.0"/><rect x="52.9" y="36.8" width="2.0" height="2.0"/><rect x="55.2" y="36.8" width="2.0" height="2.0"/><rect x="64.4" y="36.8" width="2.0" height="2.0"/><rect x="66.7" y="36.8" width="2.0" height="2.0"/><rect x="69.0" y="36.8" width="2.0" height="2.0"/><rect x="71.3" y="36.8" width="2.0" height="2.0"/><rect x="73.6" y="36.8" width="2.0" height="2.0"/><rect x="80.5" y="36.8" width="2.0" height="2.0"/><rect x="82.8" y="36.8" width="2.0" height="2.0"/><rect x="85.1" y="36.8" width="2.0" height="2.0"/><rect x="87.4" y="36.8" width="2.0" height="2.0"/><rect x="92.0" y="36.8" width="2.0" height="2.0"/><rect x="101.2" y="36.8" width="2.0" height="2.0"/><rect x="2.3" y="39.1" width="2.0" height="2.0"/><rect x="11.5" y="39.1" width="2.0" height="2.0"/><rect x="13.8" y="39.1" width="2.0" height="2.0"/><rect x="20.7" y="39.1" width="2.0" height="2.0"/><rect x="27.6" y="39.1" width="2.0" height="2.0"/><rect x="34.5" y="39.1" width="2.0" height="2.0"/><rect x="36.8" y="39.1" width="2.0" height="2.0"/><rect x="41.4" y="39.1" width="2.0" height="2.0"/><rect x="50.6" y="39.1" width="2.0" height="2.0"/><rect x="52.9" y="39.1" width="2.0" height="2.0"/><rect x="55.2" y="39.1" width="2.0" height="2.0"/><rect x="57.5" y="39.1" width="2.0" height="2.0"/><rect x="69.0" y="39.1" width="2.0" height="2.0"/><rect x="73.6" y="39.1" width="2.0" height="2.0"/><rect x="78.2" y="39.1" width="2.0" height="2.0"/><rect x="87.4" y="39.1" width="2.0" height="2.0"/><rect x="89.7" y="39.1" width="2.0" height="2.0"/><rect x="94.3" y="39.1" width="2.0" height="2.0"/><rect x="2.3" y="41.4" width="2.0" height="2.0"/><rect x="6.9" y="41.4" width="2.0" height="2.0"/><rect x="11.5" y="41.4" width="2.0" height="2.0"/><rect x="16.1" y="41.4" width="2.0" height="2.0"/><rect x="23.0" y="41.4" width="2.0" height="2.0"/><rect x="27.6" y="41.4" width="2.0" height="2.0"/><rect x="29.9" y="41.4" width="2.0" height="2.0"/><rect x="32.2" y="41.4" width="2.0" height="2.0"/><rect x="34.5" y="41.4" width="2.0" height="2.0"/><rect x="41.4" y="41.4" width="2.0" height="2.0"/><rect x="46.0" y="41.4" width="2.0" height="2.0"/><rect x="48.3" y="41.4" width="2.0" height="2.0"/><rect x="59.8" y="41.4" width="2.0" height="2.0"/><rect x="62.1" y="41.4" width="2.0" height="2.0"/><rect x="66.7" y="41.4" width="2.0" height="2.0"/><rect x="73.6" y="41.4" width="2.0" height="2.0"/><rect x="80.5" y="41.4" width="2.0" height="2.0"/><rect x="85.1" y="41.4" width="2.0" height="2.0"/><rect x="87.4" y="41.4" width="2.0" height="2.0"/><rect x="92.0" y="41.4" width="2.0" height="2.0"/><rect x="94.3" y="41.4" width="2.0" height="2.0"/><rect x="96.6" y="41.4" width="2.0" height="2.0"/><rect x="101.2" y="41.4" width="2.0" height="2.0"/><rect x="103.5" y="41.4" width="2.0" height="2.0"/><rect x="2.3" y="43.7" width="2.0" height="2.0"/><rect x="11.5" y="43.7" width="2.0" height="2.0"/><rect x="16.1" y="43.7" width="2.0" height="2.0"/><rect x="18.4" y="43.7" width="2.0" height="2.0"/><rect x="20.7" y="43.7" width="2.0" height="2.0"/><rect x="27.6" y="43.7" width="2.0" height="2.0"/><rect x="29.9" y="43.7" width="2.0" height="2.0"/><rect x="36.8" y="43.7" width="2.0" height="2.0"/><rect x="39.1" y="43.7" width="2.0" height="2.0"/><rect x="41.4" y="43.7" width="2.0" height="2.0"/><rect x="43.7" y="43.7" width="2.0" height="2.0"/><rect x="46.0" y="43.7" width="2.0" height="2.0"/><rect x="48.3" y="43.7" width="2.0" height="2.0"/><rect x="64.4" y="43.7" width="2.0" height="2.0"/><rect x="66.7" y="43.7" width="2.0" height="2.0"/><rect x="69.0" y="43.7" width="2.0" height="2.0"/><rect x="71.3" y="43.7" width="2.0" height="2.0"/><rect x="73.6" y="43.7" width="2.0" height="2.0"/><rect x="87.4" y="43.7" width="2.0" height="2.0"/><rect x="89.7" y="43.7" width="2.0" height="2.0"/><rect x="92.0" y="43.7" width="2.0" height="2.0"/><rect x="96.6" y="43.7" width="2.0" height="2.0"/><rect x="98.9" y="43.7" width="2.0" height="2.0"/><rect x="4.6" y="46.0" width="2.0" height="2.0"/><rect x="13.8" y="46.0" width="2.0" height="2.0"/><rect x="18.4" y="46.0" width="2.0" height="2.0"/><rect x="32.2" y="46.0" width="2.0" height="2.0"/><rect x="39.1" y="46.0" width="2.0" height="2.0"/><rect x="41.4" y="46.0" width="2.0" height="2.0"/><rect x="43.7" y="46.0" width="2.0" height="2.0"/><rect x="50.6" y="46.0" width="2.0" height="2.0"/><rect x="55.2" y="46.0" width="2.0" height="2.0"/><rect x="59.8" y="46.0" width="2.0" height="2.0"/><rect x="64.4" y="46.0" width="2.0" height="2.0"/><rect x="75.9" y="46.0" width="2.0" height="2.0"/><rect x="87.4" y="46.0" width="2.0" height="2.0"/><rect x="92.0" y="46.0" width="2.0" height="2.0"/><rect x="96.6" y="46.0" width="2.0" height="2.0"/><rect x="103.5" y="46.0" width="2.0" height="2.0"/><rect x="2.3" y="48.3" width="2.0" height="2.0"/><rect x="4.6" y="48.3" width="2.0" height="2.0"/><rect x="6.9" y="48.3" width="2.0" height="2.0"/><rect x="16.1" y="48.3" width="2.0" height="2.0"/><rect x="23.0" y="48.3" width="2.0" height="2.0"/><rect x="29.9" y="48.3" width="2.0" height="2.0"/><rect x="32.2" y="48.3" width="2.0" height="2.0"/><rect x="36.8" y="48.3" width="2.0" height="2.0"/><rect x="39.1" y="48.3" width="2.0" height="2.0"/><rect x="43.7" y="48.3" width="2.0" height="2.0"/><rect x="48.3" y="48.3" width="2.0" height="2.0"/><rect x="52.9" y="48.3" width="2.0" height="2.0"/><rect x="57.5" y="48.3" width="2.0" height="2.0"/><rect x="62.1" y="48.3" width="2.0" height="2.0"/><rect x="71.3" y="48.3" width="2.0" height="2.0"/><rect x="92.0" y="48.3" width="2.0" height="2.0"/><rect x="4.6" y="50.6" width="2.0" height="2.0"/><rect x="6.9" y="50.6" width="2.0" height="2.0"/><rect x="20.7" y="50.6" width="2.0" height="2.0"/><rect x="25.3" y="50.6" width="2.0" height="2.0"/><rect x="27.6" y="50.6" width="2.0" height="2.0"/><rect x="34.5" y="50.6" width="2.0" height="2.0"/><rect x="36.8" y="50.6" width="2.0" height="2.0"/><rect x="43.7" y="50.6" width="2.0" height="2.0"/><rect x="46.0" y="50.6" width="2.0" height="2.0"/><rect x="48.3" y="50.6" width="2.0" height="2.0"/><rect x="50.6" y="50.6" width="2.0" height="2.0"/><rect x="52.9" y="50.6" width="2.0" height="2.0"/><rect x="69.0" y="50.6" width="2.0" height="2.0"/><rect x="78.2" y="50.6" width="2.0" height="2.0"/><rect x="82.8" y="50.6" width="2.0" height="2.0"/><rect x="89.7" y="50.6" width="2.0" height="2.0"/><rect x="92.0" y="50.6" width="2.0" height="2.0"/><rect x="94.3" y="50.6" width="2.0" height="2.0"/><rect x="96.6" y="50.6" width="2.0" height="2.0"/><rect x="98.9" y="50.6" width="2.0" height="2.0"/><rect x="0.0" y="52.9" width="2.0" height="2.0"/><rect x="2.3" y="52.9" width="2.0" height="2.0"/><rect x="6.9" y="52.9" width="2.0" height="2.0"/><rect x="9.2" y="52.9" width="2.0" height="2.0"/><rect x="13.8" y="52.9" width="2.0" height="2.0"/><rect x="25.3" y="52.9" width="2.0" height="2.0"/><rect x="27.6" y="52.9" width="2.0" height="2.0"/><rect x="34.5" y="52.9" width="2.0" height="2.0"/><rect x="39.1" y="52.9" width="2.0" height="2.0"/><rect x="43.7" y="52.9" width="2.0" height="2.0"/><rect x="50.6" y="52.9" width="2.0" height="2.0"/><rect x="55.2" y="52.9" width="2.0" height="2.0"/><rect x="59.8" y="52.9" width="2.0" height="2.0"/><rect x="62.1" y="52.9" width="2.0" height="2.0"/><rect x="66.7" y="52.9" width="2.0" height="2.0"/><rect x="75.9" y="52.9" width="2.0" height="2.0"/><rect x="85.1" y="52.9" width="2.0" height="2.0"/><rect x="87.4" y="52.9" width="2.0" height="2.0"/><rect x="89.7" y="52.9" width="2.0" height="2.0"/><rect x="94.3" y="52.9" width="2.0" height="2.0"/><rect x="96.6" y="52.9" width="2.0" height="2.0"/><rect x="98.9" y="52.9" width="2.0" height="2.0"/><rect x="0.0" y="55.2" width="2.0" height="2.0"/><rect x="9.2" y="55.2" width="2.0" height="2.0"/><rect x="11.5" y="55.2" width="2.0" height="2.0"/><rect x="18.4" y="55.2" width="2.0" height="2.0"/><rect x="23.0" y="55.2" width="2.0" height="2.0"/><rect x="34.5" y="55.2" width="2.0" height="2.0"/><rect x="39.1" y="55.2" width="2.0" height="2.0"/><rect x="41.4" y="55.2" width="2.0" height="2.0"/><rect x="46.0" y="55.2" width="2.0" height="2.0"/><rect x="48.3" y="55.2" width="2.0" height="2.0"/><rect x="52.9" y="55.2" width="2.0" height="2.0"/><rect x="55.2" y="55.2" width="2.0" height="2.0"/><rect x="59.8" y="55.2" width="2.0" height="2.0"/><rect x="66.7" y="55.2" width="2.0" height="2.0"/><rect x="73.6" y="55.2" width="2.0" height="2.0"/><rect x="80.5" y="55.2" width="2.0" height="2.0"/><rect x="87.4" y="55.2" width="2.0" height="2.0"/><rect x="2.3" y="57.5" width="2.0" height="2.0"/><rect x="6.9" y="57.5" width="2.0" height="2.0"/><rect x="11.5" y="57.5" width="2.0" height="2.0"/><rect x="23.0" y="57.5" width="2.0" height="2.0"/><rect x="27.6" y="57.5" width="2.0" height="2.0"/><rect x="34.5" y="57.5" width="2.0" height="2.0"/><rect x="46.0" y="57.5" width="2.0" height="2.0"/><rect x="48.3" y="57.5" width="2.0" height="2.0"/><rect x="50.6" y="57.5" width="2.0" height="2.0"/><rect x="59.8" y="57.5" width="2.0" height="2.0"/><rect x="64.4" y="57.5" width="2.0" height="2.0"/><rect x="75.9" y="57.5" width="2.0" height="2.0"/><rect x="78.2" y="57.5" width="2.0" height="2.0"/><rect x="80.5" y="57.5" width="2.0" height="2.0"/><rect x="82.8" y="57.5" width="2.0" height="2.0"/><rect x="85.1" y="57.5" width="2.0" height="2.0"/><rect x="92.0" y="57.5" width="2.0" height="2.0"/><rect x="96.6" y="57.5" width="2.0" height="2.0"/><rect x="101.2" y="57.5" width="2.0" height="2.0"/><rect x="103.5" y="57.5" width="2.0" height="2.0"/><rect x="0.0" y="59.8" width="2.0" height="2.0"/><rect x="9.2" y="59.8" width="2.0" height="2.0"/><rect x="11.5" y="59.8" width="2.0" height="2.0"/><rect x="13.8" y="59.8" width="2.0" height="2.0"/><rect x="16.1" y="59.8" width="2.0" height="2.0"/><rect x="20.7" y="59.8" width="2.0" height="2.0"/><rect x="29.9" y="59.8" width="2.0" height="2.0"/><rect x="36.8" y="59.8" width="2.0" height="2.0"/><rect x="39.1" y="59.8" width="2.0" height="2.0"/><rect x="43.7" y="59.8" width="2.0" height="2.0"/><rect x="46.0" y="59.8" width="2.0" height="2.0"/><rect x="48.3" y="59.8" width="2.0" height="2.0"/><rect x="52.9" y="59.8" width="2.0" height="2.0"/><rect x="55.2" y="59.8" width="2.0" height="2.0"/><rect x="64.4" y="59.8" width="2.0" height="2.0"/><rect x="66.7" y="59.8" width="2.0" height="2.0"/><rect x="71.3" y="59.8" width="2.0" height="2.0"/><rect x="78.2" y="59.8" width="2.0" height="2.0"/><rect x="80.5" y="59.8" width="2.0" height="2.0"/><rect x="87.4" y="59.8" width="2.0" height="2.0"/><rect x="89.7" y="59.8" width="2.0" height="2.0"/><rect x="94.3" y="59.8" width="2.0" height="2.0"/><rect x="96.6" y="59.8" width="2.0" height="2.0"/><rect x="4.6" y="62.1" width="2.0" height="2.0"/><rect x="9.2" y="62.1" width="2.0" height="2.0"/><rect x="13.8" y="62.1" width="2.0" height="2.0"/><rect x="16.1" y="62.1" width="2.0" height="2.0"/><rect x="18.4" y="62.1" width="2.0" height="2.0"/><rect x="23.0" y="62.1" width="2.0" height="2.0"/><rect x="25.3" y="62.1" width="2.0" height="2.0"/><rect x="27.6" y="62.1" width="2.0" height="2.0"/><rect x="32.2" y="62.1" width="2.0" height="2.0"/><rect x="43.7" y="62.1" width="2.0" height="2.0"/><rect x="46.0" y="62.1" width="2.0" height="2.0"/><rect x="48.3" y="62.1" width="2.0" height="2.0"/><rect x="52.9" y="62.1" width="2.0" height="2.0"/><rect x="55.2" y="62.1" width="2.0" height="2.0"/><rect x="57.5" y="62.1" width="2.0" height="2.0"/><rect x="59.8" y="62.1" width="2.0" height="2.0"/><rect x="62.1" y="62.1" width="2.0" height="2.0"/><rect x="64.4" y="62.1" width="2.0" height="2.0"/><rect x="71.3" y="62.1" width="2.0" height="2.0"/><rect x="73.6" y="62.1" width="2.0" height="2.0"/><rect x="75.9" y="62.1" width="2.0" height="2.0"/><rect x="80.5" y="62.1" width="2.0" height="2.0"/><rect x="89.7" y="62.1" width="2.0" height="2.0"/><rect x="92.0" y="62.1" width="2.0" height="2.0"/><rect x="94.3" y="62.1" width="2.0" height="2.0"/><rect x="96.6" y="62.1" width="2.0" height="2.0"/><rect x="101.2" y="62.1" width="2.0" height="2.0"/><rect x="2.3" y="64.4" width="2.0" height="2.0"/><rect x="4.6" y="64.4" width="2.0" height="2.0"/><rect x="6.9" y="64.4" width="2.0" height="2.0"/><rect x="9.2" y="64.4" width="2.0" height="2.0"/><rect x="11.5" y="64.4" width="2.0" height="2.0"/><rect x="16.1" y="64.4" width="2.0" height="2.0"/><rect x="18.4" y="64.4" width="2.0" height="2.0"/><rect x="25.3" y="64.4" width="2.0" height="2.0"/><rect x="29.9" y="64.4" width="2.0" height="2.0"/><rect x="36.8" y="64.4" width="2.0" height="2.0"/><rect x="39.1" y="64.4" width="2.0" height="2.0"/><rect x="41.4" y="64.4" width="2.0" height="2.0"/><rect x="46.0" y="64.4" width="2.0" height="2.0"/><rect x="48.3" y="64.4" width="2.0" height="2.0"/><rect x="52.9" y="64.4" width="2.0" height="2.0"/><rect x="55.2" y="64.4" width="2.0" height="2.0"/><rect x="57.5" y="64.4" width="2.0" height="2.0"/><rect x="59.8" y="64.4" width="2.0" height="2.0"/><rect x="62.1" y="64.4" width="2.0" height="2.0"/><rect x="64.4" y="64.4" width="2.0" height="2.0"/><rect x="75.9" y="64.4" width="2.0" height="2.0"/><rect x="82.8" y="64.4" width="2.0" height="2.0"/><rect x="94.3" y="64.4" width="2.0" height="2.0"/><rect x="98.9" y="64.4" width="2.0" height="2.0"/><rect x="103.5" y="64.4" width="2.0" height="2.0"/><rect x="0.0" y="66.7" width="2.0" height="2.0"/><rect x="2.3" y="66.7" width="2.0" height="2.0"/><rect x="4.6" y="66.7" width="2.0" height="2.0"/><rect x="9.2" y="66.7" width="2.0" height="2.0"/><rect x="11.5" y="66.7" width="2.0" height="2.0"/><rect x="13.8" y="66.7" width="2.0" height="2.0"/><rect x="18.4" y="66.7" width="2.0" height="2.0"/><rect x="23.0" y="66.7" width="2.0" height="2.0"/><rect x="25.3" y="66.7" width="2.0" height="2.0"/><rect x="27.6" y="66.7" width="2.0" height="2.0"/><rect x="32.2" y="66.7" width="2.0" height="2.0"/><rect x="43.7" y="66.7" width="2.0" height="2.0"/><rect x="46.0" y="66.7" width="2.0" height="2.0"/><rect x="48.3" y="66.7" width="2.0" height="2.0"/><rect x="50.6" y="66.7" width="2.0" height="2.0"/><rect x="52.9" y="66.7" width="2.0" height="2.0"/><rect x="55.2" y="66.7" width="2.0" height="2.0"/><rect x="64.4" y="66.7" width="2.0" height="2.0"/><rect x="66.7" y="66.7" width="2.0" height="2.0"/><rect x="69.0" y="66.7" width="2.0" height="2.0"/><rect x="71.3" y="66.7" width="2.0" height="2.0"/><rect x="78.2" y="66.7" width="2.0" height="2.0"/><rect x="82.8" y="66.7" width="2.0" height="2.0"/><rect x="92.0" y="66.7" width="2.0" height="2.0"/><rect x="0.0" y="69.0" width="2.0" height="2.0"/><rect x="2.3" y="69.0" width="2.0" height="2.0"/><rect x="4.6" y="69.0" width="2.0" height="2.0"/><rect x="11.5" y="69.0" width="2.0" height="2.0"/><rect x="16.1" y="69.0" width="2.0" height="2.0"/><rect x="18.4" y="69.0" width="2.0" height="2.0"/><rect x="23.0" y="69.0" width="2.0" height="2.0"/><rect x="25.3" y="69.0" width="2.0" height="2.0"/><rect x="29.9" y="69.0" width="2.0" height="2.0"/><rect x="32.2" y="69.0" width="2.0" height="2.0"/><rect x="34.5" y="69.0" width="2.0" height="2.0"/><rect x="39.1" y="69.0" width="2.0" height="2.0"/><rect x="41.4" y="69.0" width="2.0" height="2.0"/><rect x="46.0" y="69.0" width="2.0" height="2.0"/><rect x="48.3" y="69.0" width="2.0" height="2.0"/><rect x="66.7" y="69.0" width="2.0" height="2.0"/><rect x="69.0" y="69.0" width="2.0" height="2.0"/><rect x="73.6" y="69.0" width="2.0" height="2.0"/><rect x="87.4" y="69.0" width="2.0" height="2.0"/><rect x="96.6" y="69.0" width="2.0" height="2.0"/><rect x="98.9" y="69.0" width="2.0" height="2.0"/><rect x="0.0" y="71.3" width="2.0" height="2.0"/><rect x="2.3" y="71.3" width="2.0" height="2.0"/><rect x="4.6" y="71.3" width="2.0" height="2.0"/><rect x="6.9" y="71.3" width="2.0" height="2.0"/><rect x="11.5" y="71.3" width="2.0" height="2.0"/><rect x="13.8" y="71.3" width="2.0" height="2.0"/><rect x="16.1" y="71.3" width="2.0" height="2.0"/><rect x="18.4" y="71.3" width="2.0" height="2.0"/><rect x="23.0" y="71.3" width="2.0" height="2.0"/><rect x="32.2" y="71.3" width="2.0" height="2.0"/><rect x="39.1" y="71.3" width="2.0" height="2.0"/><rect x="41.4" y="71.3" width="2.0" height="2.0"/><rect x="48.3" y="71.3" width="2.0" height="2.0"/><rect x="52.9" y="71.3" width="2.0" height="2.0"/><rect x="57.5" y="71.3" width="2.0" height="2.0"/><rect x="59.8" y="71.3" width="2.0" height="2.0"/><rect x="82.8" y="71.3" width="2.0" height="2.0"/><rect x="85.1" y="71.3" width="2.0" height="2.0"/><rect x="89.7" y="71.3" width="2.0" height="2.0"/><rect x="92.0" y="71.3" width="2.0" height="2.0"/><rect x="94.3" y="71.3" width="2.0" height="2.0"/><rect x="103.5" y="71.3" width="2.0" height="2.0"/><rect x="2.3" y="73.6" width="2.0" height="2.0"/><rect x="6.9" y="73.6" width="2.0" height="2.0"/><rect x="13.8" y="73.6" width="2.0" height="2.0"/><rect x="18.4" y="73.6" width="2.0" height="2.0"/><rect x="20.7" y="73.6" width="2.0" height="2.0"/><rect x="23.0" y="73.6" width="2.0" height="2.0"/><rect x="29.9" y="73.6" width="2.0" height="2.0"/><rect x="32.2" y="73.6" width="2.0" height="2.0"/><rect x="34.5" y="73.6" width="2.0" height="2.0"/><rect x="41.4" y="73.6" width="2.0" height="2.0"/><rect x="43.7" y="73.6" width="2.0" height="2.0"/><rect x="50.6" y="73.6" width="2.0" height="2.0"/><rect x="52.9" y="73.6" width="2.0" height="2.0"/><rect x="62.1" y="73.6" width="2.0" height="2.0"/><rect x="71.3" y="73.6" width="2.0" height="2.0"/><rect x="73.6" y="73.6" width="2.0" height="2.0"/><rect x="75.9" y="73.6" width="2.0" height="2.0"/><rect x="80.5" y="73.6" width="2.0" height="2.0"/><rect x="85.1" y="73.6" width="2.0" height="2.0"/><rect x="87.4" y="73.6" width="2.0" height="2.0"/><rect x="89.7" y="73.6" width="2.0" height="2.0"/><rect x="94.3" y="73.6" width="2.0" height="2.0"/><rect x="98.9" y="73.6" width="2.0" height="2.0"/><rect x="101.2" y="73.6" width="2.0" height="2.0"/><rect x="0.0" y="75.9" width="2.0" height="2.0"/><rect x="2.3" y="75.9" width="2.0" height="2.0"/><rect x="4.6" y="75.9" width="2.0" height="2.0"/><rect x="6.9" y="75.9" width="2.0" height="2.0"/><rect x="11.5" y="75.9" width="2.0" height="2.0"/><rect x="13.8" y="75.9" width="2.0" height="2.0"/><rect x="16.1" y="75.9" width="2.0" height="2.0"/><rect x="23.0" y="75.9" width="2.0" height="2.0"/><rect x="29.9" y="75.9" width="2.0" height="2.0"/><rect x="34.5" y="75.9" width="2.0" height="2.0"/><rect x="36.8" y="75.9" width="2.0" height="2.0"/><rect x="46.0" y="75.9" width="2.0" height="2.0"/><rect x="62.1" y="75.9" width="2.0" height="2.0"/><rect x="64.4" y="75.9" width="2.0" height="2.0"/><rect x="66.7" y="75.9" width="2.0" height="2.0"/><rect x="69.0" y="75.9" width="2.0" height="2.0"/><rect x="71.3" y="75.9" width="2.0" height="2.0"/><rect x="73.6" y="75.9" width="2.0" height="2.0"/><rect x="78.2" y="75.9" width="2.0" height="2.0"/><rect x="82.8" y="75.9" width="2.0" height="2.0"/><rect x="85.1" y="75.9" width="2.0" height="2.0"/><rect x="89.7" y="75.9" width="2.0" height="2.0"/><rect x="101.2" y="75.9" width="2.0" height="2.0"/><rect x="6.9" y="78.2" width="2.0" height="2.0"/><rect x="11.5" y="78.2" width="2.0" height="2.0"/><rect x="16.1" y="78.2" width="2.0" height="2.0"/><rect x="20.7" y="78.2" width="2.0" height="2.0"/><rect x="25.3" y="78.2" width="2.0" height="2.0"/><rect x="27.6" y="78.2" width="2.0" height="2.0"/><rect x="29.9" y="78.2" width="2.0" height="2.0"/><rect x="36.8" y="78.2" width="2.0" height="2.0"/><rect x="41.4" y="78.2" width="2.0" height="2.0"/><rect x="43.7" y="78.2" width="2.0" height="2.0"/><rect x="48.3" y="78.2" width="2.0" height="2.0"/><rect x="50.6" y="78.2" width="2.0" height="2.0"/><rect x="52.9" y="78.2" width="2.0" height="2.0"/><rect x="57.5" y="78.2" width="2.0" height="2.0"/><rect x="66.7" y="78.2" width="2.0" height="2.0"/><rect x="69.0" y="78.2" width="2.0" height="2.0"/><rect x="71.3" y="78.2" width="2.0" height="2.0"/><rect x="73.6" y="78.2" width="2.0" height="2.0"/><rect x="78.2" y="78.2" width="2.0" height="2.0"/><rect x="82.8" y="78.2" width="2.0" height="2.0"/><rect x="85.1" y="78.2" width="2.0" height="2.0"/><rect x="92.0" y="78.2" width="2.0" height="2.0"/><rect x="96.6" y="78.2" width="2.0" height="2.0"/><rect x="101.2" y="78.2" width="2.0" height="2.0"/><rect x="4.6" y="80.5" width="2.0" height="2.0"/><rect x="6.9" y="80.5" width="2.0" height="2.0"/><rect x="11.5" y="80.5" width="2.0" height="2.0"/><rect x="13.8" y="80.5" width="2.0" height="2.0"/><rect x="20.7" y="80.5" width="2.0" height="2.0"/><rect x="23.0" y="80.5" width="2.0" height="2.0"/><rect x="25.3" y="80.5" width="2.0" height="2.0"/><rect x="29.9" y="80.5" width="2.0" height="2.0"/><rect x="34.5" y="80.5" width="2.0" height="2.0"/><rect x="39.1" y="80.5" width="2.0" height="2.0"/><rect x="55.2" y="80.5" width="2.0" height="2.0"/><rect x="66.7" y="80.5" width="2.0" height="2.0"/><rect x="69.0" y="80.5" width="2.0" height="2.0"/><rect x="71.3" y="80.5" width="2.0" height="2.0"/><rect x="80.5" y="80.5" width="2.0" height="2.0"/><rect x="94.3" y="80.5" width="2.0" height="2.0"/><rect x="103.5" y="80.5" width="2.0" height="2.0"/><rect x="4.6" y="82.8" width="2.0" height="2.0"/><rect x="9.2" y="82.8" width="2.0" height="2.0"/><rect x="16.1" y="82.8" width="2.0" height="2.0"/><rect x="34.5" y="82.8" width="2.0" height="2.0"/><rect x="41.4" y="82.8" width="2.0" height="2.0"/><rect x="52.9" y="82.8" width="2.0" height="2.0"/><rect x="55.2" y="82.8" width="2.0" height="2.0"/><rect x="59.8" y="82.8" width="2.0" height="2.0"/><rect x="69.0" y="82.8" width="2.0" height="2.0"/><rect x="85.1" y="82.8" width="2.0" height="2.0"/><rect x="87.4" y="82.8" width="2.0" height="2.0"/><rect x="89.7" y="82.8" width="2.0" height="2.0"/><rect x="92.0" y="82.8" width="2.0" height="2.0"/><rect x="94.3" y="82.8" width="2.0" height="2.0"/><rect x="101.2" y="82.8" width="2.0" height="2.0"/><rect x="103.5" y="82.8" width="2.0" height="2.0"/><rect x="0.0" y="85.1" width="2.0" height="2.0"/><rect x="9.2" y="85.1" width="2.0" height="2.0"/><rect x="13.8" y="85.1" width="2.0" height="2.0"/><rect x="23.0" y="85.1" width="2.0" height="2.0"/><rect x="29.9" y="85.1" width="2.0" height="2.0"/><rect x="32.2" y="85.1" width="2.0" height="2.0"/><rect x="34.5" y="85.1" width="2.0" height="2.0"/><rect x="39.1" y="85.1" width="2.0" height="2.0"/><rect x="46.0" y="85.1" width="2.0" height="2.0"/><rect x="48.3" y="85.1" width="2.0" height="2.0"/><rect x="55.2" y="85.1" width="2.0" height="2.0"/><rect x="57.5" y="85.1" width="2.0" height="2.0"/><rect x="64.4" y="85.1" width="2.0" height="2.0"/><rect x="66.7" y="85.1" width="2.0" height="2.0"/><rect x="75.9" y="85.1" width="2.0" height="2.0"/><rect x="78.2" y="85.1" width="2.0" height="2.0"/><rect x="80.5" y="85.1" width="2.0" height="2.0"/><rect x="82.8" y="85.1" width="2.0" height="2.0"/><rect x="92.0" y="85.1" width="2.0" height="2.0"/><rect x="101.2" y="85.1" width="2.0" height="2.0"/><rect x="0.0" y="87.4" width="2.0" height="2.0"/><rect x="4.6" y="87.4" width="2.0" height="2.0"/><rect x="9.2" y="87.4" width="2.0" height="2.0"/><rect x="20.7" y="87.4" width="2.0" height="2.0"/><rect x="29.9" y="87.4" width="2.0" height="2.0"/><rect x="32.2" y="87.4" width="2.0" height="2.0"/><rect x="34.5" y="87.4" width="2.0" height="2.0"/><rect x="41.4" y="87.4" width="2.0" height="2.0"/><rect x="48.3" y="87.4" width="2.0" height="2.0"/><rect x="50.6" y="87.4" width="2.0" height="2.0"/><rect x="52.9" y="87.4" width="2.0" height="2.0"/><rect x="57.5" y="87.4" width="2.0" height="2.0"/><rect x="62.1" y="87.4" width="2.0" height="2.0"/><rect x="73.6" y="87.4" width="2.0" height="2.0"/><rect x="78.2" y="87.4" width="2.0" height="2.0"/><rect x="80.5" y="87.4" width="2.0" height="2.0"/><rect x="82.8" y="87.4" width="2.0" height="2.0"/><rect x="89.7" y="87.4" width="2.0" height="2.0"/><rect x="96.6" y="87.4" width="2.0" height="2.0"/><rect x="103.5" y="87.4" width="2.0" height="2.0"/><rect x="2.3" y="89.7" width="2.0" height="2.0"/><rect x="16.1" y="89.7" width="2.0" height="2.0"/><rect x="27.6" y="89.7" width="2.0" height="2.0"/><rect x="32.2" y="89.7" width="2.0" height="2.0"/><rect x="36.8" y="89.7" width="2.0" height="2.0"/><rect x="41.4" y="89.7" width="2.0" height="2.0"/><rect x="43.7" y="89.7" width="2.0" height="2.0"/><rect x="46.0" y="89.7" width="2.0" height="2.0"/><rect x="48.3" y="89.7" width="2.0" height="2.0"/><rect x="52.9" y="89.7" width="2.0" height="2.0"/><rect x="55.2" y="89.7" width="2.0" height="2.0"/><rect x="64.4" y="89.7" width="2.0" height="2.0"/><rect x="73.6" y="89.7" width="2.0" height="2.0"/><rect x="78.2" y="89.7" width="2.0" height="2.0"/><rect x="87.4" y="89.7" width="2.0" height="2.0"/><rect x="89.7" y="89.7" width="2.0" height="2.0"/><rect x="96.6" y="89.7" width="2.0" height="2.0"/><rect x="101.2" y="89.7" width="2.0" height="2.0"/><rect x="0.0" y="92.0" width="2.0" height="2.0"/><rect x="4.6" y="92.0" width="2.0" height="2.0"/><rect x="6.9" y="92.0" width="2.0" height="2.0"/><rect x="11.5" y="92.0" width="2.0" height="2.0"/><rect x="16.1" y="92.0" width="2.0" height="2.0"/><rect x="18.4" y="92.0" width="2.0" height="2.0"/><rect x="20.7" y="92.0" width="2.0" height="2.0"/><rect x="23.0" y="92.0" width="2.0" height="2.0"/><rect x="34.5" y="92.0" width="2.0" height="2.0"/><rect x="39.1" y="92.0" width="2.0" height="2.0"/><rect x="46.0" y="92.0" width="2.0" height="2.0"/><rect x="55.2" y="92.0" width="2.0" height="2.0"/><rect x="57.5" y="92.0" width="2.0" height="2.0"/><rect x="59.8" y="92.0" width="2.0" height="2.0"/><rect x="69.0" y="92.0" width="2.0" height="2.0"/><rect x="73.6" y="92.0" width="2.0" height="2.0"/><rect x="75.9" y="92.0" width="2.0" height="2.0"/><rect x="78.2" y="92.0" width="2.0" height="2.0"/><rect x="87.4" y="92.0" width="2.0" height="2.0"/><rect x="89.7" y="92.0" width="2.0" height="2.0"/><rect x="92.0" y="92.0" width="2.0" height="2.0"/><rect x="94.3" y="92.0" width="2.0" height="2.0"/><rect x="96.6" y="92.0" width="2.0" height="2.0"/><rect x="101.2" y="92.0" width="2.0" height="2.0"/><rect x="13.8" y="94.3" width="2.0" height="2.0"/><rect x="16.1" y="94.3" width="2.0" height="2.0"/><rect x="20.7" y="94.3" width="2.0" height="2.0"/><rect x="23.0" y="94.3" width="2.0" height="2.0"/><rect x="29.9" y="94.3" width="2.0" height="2.0"/><rect x="36.8" y="94.3" width="2.0" height="2.0"/><rect x="41.4" y="94.3" width="2.0" height="2.0"/><rect x="48.3" y="94.3" width="2.0" height="2.0"/><rect x="50.6" y="94.3" width="2.0" height="2.0"/><rect x="52.9" y="94.3" width="2.0" height="2.0"/><rect x="55.2" y="94.3" width="2.0" height="2.0"/><rect x="57.5" y="94.3" width="2.0" height="2.0"/><rect x="62.1" y="94.3" width="2.0" height="2.0"/><rect x="69.0" y="94.3" width="2.0" height="2.0"/><rect x="71.3" y="94.3" width="2.0" height="2.0"/><rect x="75.9" y="94.3" width="2.0" height="2.0"/><rect x="82.8" y="94.3" width="2.0" height="2.0"/><rect x="87.4" y="94.3" width="2.0" height="2.0"/><rect x="89.7" y="94.3" width="2.0" height="2.0"/><rect x="96.6" y="94.3" width="2.0" height="2.0"/><rect x="0.0" y="96.6" width="2.0" height="2.0"/><rect x="2.3" y="96.6" width="2.0" height="2.0"/><rect x="4.6" y="96.6" width="2.0" height="2.0"/><rect x="6.9" y="96.6" width="2.0" height="2.0"/><rect x="16.1" y="96.6" width="2.0" height="2.0"/><rect x="18.4" y="96.6" width="2.0" height="2.0"/><rect x="23.0" y="96.6" width="2.0" height="2.0"/><rect x="29.9" y="96.6" width="2.0" height="2.0"/><rect x="32.2" y="96.6" width="2.0" height="2.0"/><rect x="41.4" y="96.6" width="2.0" height="2.0"/><rect x="46.0" y="96.6" width="2.0" height="2.0"/><rect x="57.5" y="96.6" width="2.0" height="2.0"/><rect x="66.7" y="96.6" width="2.0" height="2.0"/><rect x="71.3" y="96.6" width="2.0" height="2.0"/><rect x="80.5" y="96.6" width="2.0" height="2.0"/><rect x="89.7" y="96.6" width="2.0" height="2.0"/><rect x="96.6" y="96.6" width="2.0" height="2.0"/><rect x="98.9" y="96.6" width="2.0" height="2.0"/><rect x="103.5" y="96.6" width="2.0" height="2.0"/><rect x="0.0" y="98.9" width="2.0" height="2.0"/><rect x="9.2" y="98.9" width="2.0" height="2.0"/><rect x="11.5" y="98.9" width="2.0" height="2.0"/><rect x="13.8" y="98.9" width="2.0" height="2.0"/><rect x="23.0" y="98.9" width="2.0" height="2.0"/><rect x="25.3" y="98.9" width="2.0" height="2.0"/><rect x="32.2" y="98.9" width="2.0" height="2.0"/><rect x="39.1" y="98.9" width="2.0" height="2.0"/><rect x="43.7" y="98.9" width="2.0" height="2.0"/><rect x="55.2" y="98.9" width="2.0" height="2.0"/><rect x="59.8" y="98.9" width="2.0" height="2.0"/><rect x="64.4" y="98.9" width="2.0" height="2.0"/><rect x="69.0" y="98.9" width="2.0" height="2.0"/><rect x="71.3" y="98.9" width="2.0" height="2.0"/><rect x="73.6" y="98.9" width="2.0" height="2.0"/><rect x="75.9" y="98.9" width="2.0" height="2.0"/><rect x="82.8" y="98.9" width="2.0" height="2.0"/><rect x="89.7" y="98.9" width="2.0" height="2.0"/><rect x="98.9" y="98.9" width="2.0" height="2.0"/><rect x="103.5" y="98.9" width="2.0" height="2.0"/><rect x="0.0" y="101.2" width="2.0" height="2.0"/><rect x="6.9" y="101.2" width="2.0" height="2.0"/><rect x="9.2" y="101.2" width="2.0" height="2.0"/><rect x="13.8" y="101.2" width="2.0" height="2.0"/><rect x="34.5" y="101.2" width="2.0" height="2.0"/><rect x="39.1" y="101.2" width="2.0" height="2.0"/><rect x="41.4" y="101.2" width="2.0" height="2.0"/><rect x="46.0" y="101.2" width="2.0" height="2.0"/><rect x="55.2" y="101.2" width="2.0" height="2.0"/><rect x="57.5" y="101.2" width="2.0" height="2.0"/><rect x="66.7" y="101.2" width="2.0" height="2.0"/><rect x="71.3" y="101.2" width="2.0" height="2.0"/><rect x="73.6" y="101.2" width="2.0" height="2.0"/><rect x="80.5" y="101.2" width="2.0" height="2.0"/><rect x="94.3" y="101.2" width="2.0" height="2.0"/><rect x="101.2" y="101.2" width="2.0" height="2.0"/><rect x="2.3" y="103.5" width="2.0" height="2.0"/><rect x="4.6" y="103.5" width="2.0" height="2.0"/><rect x="6.9" y="103.5" width="2.0" height="2.0"/><rect x="11.5" y="103.5" width="2.0" height="2.0"/><rect x="13.8" y="103.5" width="2.0" height="2.0"/><rect x="16.1" y="103.5" width="2.0" height="2.0"/><rect x="18.4" y="103.5" width="2.0" height="2.0"/><rect x="23.0" y="103.5" width="2.0" height="2.0"/><rect x="25.3" y="103.5" width="2.0" height="2.0"/><rect x="27.6" y="103.5" width="2.0" height="2.0"/><rect x="34.5" y="103.5" width="2.0" height="2.0"/><rect x="57.5" y="103.5" width="2.0" height="2.0"/><rect x="59.8" y="103.5" width="2.0" height="2.0"/><rect x="64.4" y="103.5" width="2.0" height="2.0"/><rect x="69.0" y="103.5" width="2.0" height="2.0"/><rect x="73.6" y="103.5" width="2.0" height="2.0"/><rect x="85.1" y="103.5" width="2.0" height="2.0"/><rect x="87.4" y="103.5" width="2.0" height="2.0"/><rect x="92.0" y="103.5" width="2.0" height="2.0"/><rect x="98.9" y="103.5" width="2.0" height="2.0"/><rect x="103.5" y="103.5" width="2.0" height="2.0"/></g><rect x="0" y="0" width="22" height="22" fill="#fff"/><rect x="0" y="82" width="22" height="22" fill="#fff"/><rect x="84" y="0" width="26" height="22" fill="#fff"/><rect x="0" y="0" width="19" height="19" fill="#111"/><rect x="3" y="3" width="13" height="13" fill="#fff"/><rect x="5.5" y="5.5" width="8" height="8" fill="#111"/><rect x="0" y="84" width="19" height="19" fill="#111"/><rect x="3" y="87" width="13" height="13" fill="#fff"/><rect x="5.5" y="89.5" width="8" height="8" fill="#111"/><rect x="86" y="0" width="19" height="19" fill="#111"/><rect x="89" y="3" width="13" height="13" fill="#fff"/><rect x="91.5" y="5.5" width="8" height="8" fill="#111"/></svg>
</div>
<div class="a" style="left:1254px;top:345px;width:40px;height:148px;background:#3ec6dc;border-radius:5px"></div>
<div class="a" style="left:1256px;top:394px;width:36px;height:1px;background:#e6f7fa"></div>
<div class="a" style="left:1256px;top:443px;width:36px;height:1px;background:#e6f7fa"></div>
<div class="a" style="left:1258px;top:350px;width:32px;font-size:14px;line-height:21px;color:#fff;text-align:center">立即<br>导账</div>
<div class="a" style="left:1258px;top:399px;width:32px;font-size:14px;line-height:21px;color:#fff;text-align:center">桌面<br>快捷</div>
<div class="a" style="left:1258px;top:448px;width:32px;font-size:14px;line-height:21px;color:#fff;text-align:center">关注<br>有礼</div>
<div class="a" style="left:1152px;top:536px;font-size:12px;line-height:16px;color:#333">登录状态</div>
<div class="a" style="left:1140px;top:566px;font-size:12px;line-height:16px;color:#333">计算?</div>
<div class="a" style="left:1147px;top:596px;font-size:12px;line-height:16px;color:#333">结转处理</div>
<div class="a" style="left:1136px;top:626px;font-size:12px;line-height:16px;color:#333">迭代更新</div>
<div class="a" style="left:1242px;top:536px;font-size:12px;line-height:16px;color:#666">02月16日</div>
<div class="a" style="left:1242px;top:566px;font-size:12px;line-height:16px;color:#666">02月05日</div>
<div class="a" style="left:1242px;top:596px;font-size:12px;line-height:16px;color:#666">03月17日</div>
<div class="a" style="left:1242px;top:626px;font-size:12px;line-height:16px;color:#666">03月16日</div>
<!-- card 3 -->
<div class="a" style="left:180px;top:664px;width:1123px;height:60px;background:#fff;border-radius:4px 0 0 0"></div>
<svg class="a" style="left:200px;top:678px" width="20" height="18" viewBox="0 0 20 18"><path d="M0 10.5Q0 9.5 1 9.5H5.5V18H0Z" fill="#222"/><path d="M6 18V2Q6 0 9 0Q12 0 12 2V18Z" fill="#222"/><path d="M12.5 6H18Q19 6 19 7V18H12.5Z" fill="#222"/></svg>
<div class="a" style="left:228px;top:676px;font-size:18px;line-height:22px;color:#222">现金流分析</div>
<div class="a" style="left:200px;top:709px;width:1102px;height:1px;background:#e5e5e5"></div><!-- horizontal scrollbar -->
<div class="a" style="left:160px;top:711px;width:1143px;height:17px;background:#f1f1f1"></div>
<svg class="a" style="left:165px;top:715px" width="6" height="9" viewBox="0 0 6 9"><path d="M5.5 0.5L0.5 4.5L5.5 8.5Z" fill="#a3a3a3"/></svg>
<div class="a" style="left:177px;top:713px;width:1053px;height:13px;background:#c1c1c1"></div>
<svg class="a" style="left:1290px;top:715px" width="6" height="9" viewBox="0 0 6 9"><path d="M0.5 0.5L5.5 4.5L0.5 8.5Z" fill="#505050"/></svg>
<div class="a" style="left:1303px;top:711px;width:16px;height:17px;background:#dcdcdc"></div>


<div id="drop" class="a"></div><div class="a hd" style="left:190px"><svg class="a" style="left:0;top:0" width="170" height="30" viewBox="0 0 170 30" overflow="hidden"><path d="M0 14.3 L4.5 5.5 Q6 3 8.5 4.2 L29.5 15.8 Q32 17.2 30.8 19.6 L25.5 30.5" fill="none" stroke="#3ec6dc" stroke-linecap="round" stroke-linejoin="round" stroke-width="2.1"/>
 <path d="M0 22.5 L12.5 30" fill="none" stroke="#3ec6dc" stroke-linecap="round" stroke-linejoin="round" stroke-width="2.1"/>
 <path d="M10 1 L32 13.2 M15 -0.5 L31.5 8.8" fill="none" stroke="#3ec6dc" stroke-linecap="round" stroke-linejoin="round" stroke-width="2.1"/>
 <path d="M13.4 12.1 L11 25 M10.2 16.9 L14.2 18.6 L20.4 16.3 M8.1 19.5 L18.3 21.6 M10.5 22.8 L16.8 24.2" fill="none" stroke="#3ec6dc" stroke-linecap="round" stroke-linejoin="round" stroke-width="1.9"/></svg><span>基础设置</span></div><div class="a it" style="left:200px;top:243px">科目期初</div><div class="a it" style="left:200px;top:282px">凭证类型</div><div class="a it" style="left:200px;top:321px">凭证配置</div><div class="a it" style="left:200px;top:360px">财税设置</div><div class="a it" style="left:200px;top:399px">科目现金流量对照</div><div class="a it" style="left:200px;top:439px">操作日志</div><div class="a it" style="left:200px;top:478px">账套迁移</div><div class="a it" style="left:200px;top:517px">单据模板</div><div class="a it" style="left:200px;top:556px">打印模板</div><div class="a it" style="left:200px;top:595px">打印机管理</div><div class="a hd" style="left:380px"><svg class="a" style="left:0;top:0" width="170" height="30" viewBox="0 0 170 30" overflow="hidden"><path d="M0 14.3 L6.5 1.5 Q8 -1 10.5 0.3 L36 13 Q38.5 14.5 37 17 L30 30" fill="none" stroke="#3ec6dc" stroke-linecap="round" stroke-linejoin="round" stroke-width="2.1"/>
 <path d="M0 22.5 L12.5 30" fill="none" stroke="#3ec6dc" stroke-linecap="round" stroke-linejoin="round" stroke-width="2.1"/>
 <path d="M10.3 5.6 L17.3 9.5 M7.3 11.2 L14 15 M4 17.3 L24 28.3" fill="none" stroke="#3ec6dc" stroke-linecap="round" stroke-linejoin="round" stroke-width="2.4"/>
 <circle cx="25.7" cy="13.6" r="3.3" fill="#3ec6dc"/><path d="M16.5 17.5 Q19 14.5 23.5 16.5 L27 18.5 Q29.5 20.5 27.8 23.5 Z" fill="#3ec6dc"/></svg><span>基础数据</span></div><div class="a it" style="left:390px;top:243px">部门员工</div><div class="a it" style="left:390px;top:282px">往来单位</div><div class="a it" style="left:390px;top:321px">仓库</div><div class="a it" style="left:390px;top:360px">存货</div><div class="a it" style="left:390px;top:399px">计量单位</div><div class="a it" style="left:390px;top:438px">币种设置</div><div class="a it" style="left:390px;top:477px">项目</div><div class="a it" style="left:390px;top:516px">物料清单</div><div class="a it" style="left:390px;top:555px">存货别名对照</div><div class="a hd" style="left:570px"><svg class="a" style="left:0;top:0" width="170" height="30" viewBox="0 0 170 30" overflow="hidden"><path d="M24.8 11.6 A10.5 10.5 0 1 0 19.5 23.9" fill="none" stroke="#3ec6dc" stroke-width="7.4" stroke-linecap="round"/><path d="M16 19.5 L25.5 23 L20 30 Z" fill="#3ec6dc"/><path d="M11.2 12.3 L16.8 11 L18 16.8 L12.4 18 Z" fill="#3ec6dc"/><circle cx="19.7" cy="17.9" r="1.1" fill="#3ec6dc"/></svg><span>小畅报销</span></div><div class="a it" style="left:580px;top:243px">费用类型</div><div class="a it" style="left:580px;top:282px">报销单类型</div><div class="a it" style="left:580px;top:321px">审批流设置</div><div class="a it" style="left:580px;top:360px">支付设置</div><div class="a hd" style="left:760px"><svg class="a" style="left:0;top:0" width="170" height="30" viewBox="0 0 170 30" overflow="hidden"><path d="M7.6 -1 Q4 4 6 7.5 Q7.5 10 10.6 10.6 L15.2 29.5 M22 29.5 L16.4 9.8 Q18.8 8 18.4 4 Q18.2 1.5 17 -1" fill="none" stroke="#3ec6dc" stroke-linecap="round" stroke-linejoin="round" stroke-width="1.8"/>
 <path d="M7.5 -1 L9.2 4.6 Q9.8 6 11.5 5.8 L14.2 5.6 Q15.5 5.4 15.3 4 L14.8 -1" fill="none" stroke="#3ec6dc" stroke-linecap="round" stroke-linejoin="round" stroke-width="1.8"/>
 <path d="M19 11.7 L32 9 Q34.5 8.8 34.5 11.5 Q34.5 13.8 32.5 14.5 L20.3 17.2 M19.5 14.2 L32 11.8" fill="none" stroke="#3ec6dc" stroke-linecap="round" stroke-linejoin="round" stroke-width="1.7"/>
 <path d="M10.2 16.8 L2 19" fill="none" stroke="#3ec6dc" stroke-linecap="round" stroke-linejoin="round" stroke-width="1.5"/><path d="M0 18 L3 17.3 L3.3 20.5 L0 21.5 Z" fill="#3ec6dc"/></svg><span>库存设置</span></div><div class="a it" style="left:770px;top:243px">库存选项</div><div class="a it" style="left:770px;top:282px">库存期初</div><div class="a hd" style="left:950px"><svg class="a" style="left:0;top:0" width="170" height="30" viewBox="0 0 170 30" overflow="hidden"><path d="M0 12.2 L6 2.5 Q7.3 0.5 9.5 1.7 L33 15.5 Q35.5 17 34.2 19.5 L28.5 30.5" fill="none" stroke="#3ec6dc" stroke-linecap="round" stroke-linejoin="round" stroke-width="2.1"/>
 <path d="M14 -0.5 L21.5 3.5 Q24.5 5.5 24 10" fill="none" stroke="#3ec6dc" stroke-linecap="round" stroke-linejoin="round" stroke-width="2.1"/>
 <path d="M5.2 15.3 L12 13.3 L15.2 21 L25.6 17.6 M22.4 14.9 L25.8 17.8 L23.3 22" fill="none" stroke="#3ec6dc" stroke-linecap="round" stroke-linejoin="round" stroke-width="2.1"/>
 <path d="M2.8 19.2 L20.6 28.8 M0 23 L12.5 30" fill="none" stroke="#3ec6dc" stroke-linecap="round" stroke-linejoin="round" stroke-width="2.1"/></svg><span>增值应用</span></div><div class="a it" style="left:960px;top:243px">小畅报销</div><div class="a it" style="left:960px;top:282px">库存核算</div><div class="a it" style="left:960px;top:321px">外贸行业方案</div><div class="a" style="left:190px;top:426px;width:170px;height:0;border-top:1px dashed #d6d6d6"></div><div class="a" style="left:520px;top:514px;width:30px;height:17px;border:1px solid #3ec6dc;border-radius:2px;color:#3ec6dc;font-size:12px;line-height:17px;text-align:center">列表</div>
<div id="edge" class="a"></div>
<svg class="a" style="left:1333px;top:83px" width="20" height="20" viewBox="0 0 20 20"><defs><linearGradient id="gs" x1="0" y1="0" x2="1" y2="1"><stop offset="0" stop-color="#2a7de1"/><stop offset="1" stop-color="#1d3fcf"/></linearGradient></defs><circle cx="8.5" cy="8.5" r="5.8" fill="none" stroke="url(#gs)" stroke-width="2.6"/><path d="M12.8 12.8L17.5 17.2" stroke="#a43ee0" stroke-width="3" stroke-linecap="round"/></svg>
<svg class="a" style="left:1334px;top:126px" width="20" height="20" viewBox="0 0 20 20"><path d="M7.5 1 C8.3 5.5 9.5 6.7 14 7.5 C9.5 8.3 8.3 9.5 7.5 14 C6.7 9.5 5.5 8.3 1 7.5 C5.5 6.7 6.7 5.5 7.5 1Z" fill="#8a3ef2"/><path d="M14.5 10.5 C14.9 12.6 15.4 13.1 17.5 13.5 C15.4 13.9 14.9 14.4 14.5 16.5 C14.1 14.4 13.6 13.9 11.5 13.5 C13.6 13.1 14.1 12.6 14.5 10.5Z" fill="#f5b21a"/></svg>
<svg class="a" style="left:1334px;top:168px" width="18" height="18" viewBox="0 0 18 18"><path d="M10.5 1.5 H15.5 A1 1 0 0 1 16.5 2.5 V7.5 L7.5 16.5 A1.4 1.4 0 0 1 5.5 16.5 L1.5 12.5 A1.4 1.4 0 0 1 1.5 10.5 Z" fill="#1a5fd6"/><circle cx="13" cy="5" r="1.6" fill="#fbd14b"/></svg>
<svg class="a" style="left:1334px;top:212px" width="18" height="15" viewBox="0 0 18 15"><path d="M6 3.5V1.5H12V3.5" fill="none" stroke="#f0b323" stroke-width="1.5"/><rect x="0.5" y="3.5" width="17" height="4" rx="1" fill="#1f5fd5"/><rect x="1" y="7" width="16" height="7" rx="1" fill="#129c7a"/><circle cx="9" cy="7.5" r="1.5" fill="#f0b323"/></svg>
<svg class="a" style="left:1334px;top:251px" width="19" height="19" viewBox="0 0 19 19"><path d="M11.5 1.5H12.8V3H14V1.5H15.3V3H16.5V1.5H18V6L16.8 7V12.5H18V14H11.5V12.5H12.7V7L11.5 6Z" fill="#9b45e6"/><circle cx="6" cy="5.5" r="2.4" fill="#2a6ee8"/><path d="M3.5 8.5H8.5L7.5 9.5L8.8 15.5H10V18H1.5V15.5H2.7L4 9.5Z" fill="#1f4fd0"/></svg>
<svg class="a" style="left:1334px;top:293px" width="18" height="19" viewBox="0 0 18 19"><defs><linearGradient id="go" x1="0" y1="0" x2="1" y2="1"><stop offset="0" stop-color="#3c7bea"/><stop offset=".5" stop-color="#7f6de8"/><stop offset="1" stop-color="#c27ce0"/></linearGradient></defs><path d="M9 1L16.5 5.2V13.8L9 18L1.5 13.8V5.2Z" fill="url(#go)"/><circle cx="9" cy="9.5" r="3" fill="#f7f7f7"/><path d="M9 1L16.5 5.2L13 7" fill="#57c6f0"/></svg>
<svg class="a" style="left:1335px;top:336px" width="17" height="17" viewBox="0 0 17 17"><rect x="5" y="1" width="11" height="14" rx="1" fill="#28a8ea"/><path d="M5 8L16 8V15H5Z" fill="#0f78d4"/><rect x="0.5" y="3.5" width="10" height="10" rx="1" fill="#0a64c4"/><circle cx="5.5" cy="8.5" r="2.8" fill="none" stroke="#fff" stroke-width="1.5"/></svg>
<svg class="a" style="left:1333px;top:380px" width="19" height="14" viewBox="0 0 19 14"><path d="M0.5 2.5L18.5 0.5L12 13.5L8.5 8.5Z" fill="#1e6ad8"/><path d="M0.5 2.5L18.5 0.5L5.5 7Z" fill="#3d9af0"/><path d="M5 6.5L8.5 8.5L5.5 11Z" fill="#f2a81d"/><path d="M18.5 0.5L5.5 7L6.5 8" fill="#f2a81d"/></svg>
<svg class="a" style="left:1334px;top:420px" width="18" height="18" viewBox="0 0 18 18"><path d="M9 1C11.5 1 12.5 3.5 12.5 5C15 5.5 16.5 8 16 10.5C15.5 13 13.5 14 11 14H7C4.5 14 2.5 13 2 10.5C1.5 8 3 5.5 5.5 5C5.5 3.5 6.5 1 9 1Z" fill="#178a6e"/><path d="M9 1C11.5 1 12.5 3.5 12.5 5C15 5.5 16.5 8 16 10.5C15.5 13 13.5 14 11 14H9Z" fill="#2aa583"/><rect x="8" y="13" width="2.2" height="4.5" fill="#f0a31f"/></svg>
<svg class="a" style="left:1335px;top:466px" width="15" height="15" viewBox="0 0 15 15"><path d="M7.5 0.5V14.5M0.5 7.5H14.5" stroke="#222" stroke-width="1.25"/></svg>
<div class="a" style="left:1329px;top:639px;width:28px;height:1px;background:#c8c8c8"></div>
<svg class="a" style="left:1334px;top:656px" width="18" height="14" viewBox="0 0 18 14"><rect x="0.7" y="0.7" width="16.6" height="12.6" rx="1.5" fill="none" stroke="#222" stroke-width="1.2"/><path d="M12 0.7V13.3" stroke="#222" stroke-width="1.2"/><path d="M3.5 7H9M7 4.8L9.2 7L7 9.2" fill="none" stroke="#222" stroke-width="1.2"/></svg>
<svg class="a" style="left:1334px;top:696px" width="17" height="17" viewBox="0 0 16 16"><path d="M6.6 1H9.4L9.9 3.1L11.9 2.2L13.8 4.1L12.9 6.1L15 6.6V9.4L12.9 9.9L13.8 11.9L11.9 13.8L9.9 12.9L9.4 15H6.6L6.1 12.9L4.1 13.8L2.2 11.9L3.1 9.9L1 9.4V6.6L3.1 6.1L2.2 4.1L4.1 2.2L6.1 3.1Z" fill="none" stroke="#222" stroke-width="1.25" stroke-linejoin="round"/><circle cx="8" cy="8" r="2.3" fill="none" stroke="#222" stroke-width="1.25"/></svg>

<div id="taskbar" class="a"></div>
<svg class="a" style="left:16px;top:740px" width="17" height="17" viewBox="0 0 17 17"><path d="M0 2.3L7 1.3V8H0Z M8 1.2L17 0V8H8Z M0 9H7V15.7L0 14.7Z M8 9H17V17L8 15.8Z" fill="#111"/></svg>
<div class="a" style="left:58px;top:734px;width:28px;height:28px;border-radius:50%;background:#c9d1da"></div>
<svg class="a" style="left:63px;top:739px" width="18" height="18" viewBox="0 0 18 18"><circle cx="10.5" cy="7.5" r="5.5" fill="none" stroke="#111" stroke-width="1.6"/><path d="M6.5 11.5L1.5 16.5" stroke="#111" stroke-width="1.7" stroke-linecap="round"/></svg>
<svg class="a" style="left:111px;top:739px" width="18" height="18" viewBox="0 0 18 18"><path d="M1 2.5H12M1 15.5H12M2.5 5.5V12.5H11V5.5Z M16 1.5V4 M16 7V16.5" fill="none" stroke="#111" stroke-width="1.3"/><rect x="14.5" y="4.5" width="3" height="2.5" fill="#111"/></svg>
<svg class="a" style="left:159px;top:737px" width="24" height="22" viewBox="0 0 24 22"><path d="M7 1L22 4.5V14.5L7 11Z" fill="#4cb6f2"/><path d="M7 1L22 4.5L20 5 L8 2.5Z" fill="#9ad8fa"/><path d="M1 16L12 14L20 18L9 21Z" fill="#e9eef2" stroke="#b8c2cc" stroke-width=".6"/><path d="M13 12.5L14 14.5" stroke="#8a9aa8" stroke-width="1"/></svg>
<svg class="a" style="left:208px;top:736px" width="25" height="25" viewBox="0 0 24 24"><circle cx="12" cy="12" r="11.5" fill="#db4437"/><path d="M12 12 L22.5 6.5 A11.5 11.5 0 0 1 12 23.5Z" fill="#fbbc05"/><path d="M12 12 L12 23.5 A11.5 11.5 0 0 1 1.5 6.5Z" fill="#0f9d58"/><path d="M12 12 L1.5 6.5 A11.5 11.5 0 0 1 12 0.5 Z" fill="#db4437"/><circle cx="12" cy="12" r="5.5" fill="#fff"/><circle cx="12" cy="12" r="4.3" fill="#4285f4"/></svg>
<div class="a" style="left:257px;top:736px;width:24px;height:24px;background:#09b83e"></div>
<svg class="a" style="left:257px;top:736px" width="24" height="24" viewBox="0 0 24 24"><ellipse cx="9.5" cy="9.5" rx="6.5" ry="5.5" fill="#fff"/><path d="M5 13L4 16L8 14Z" fill="#fff"/><ellipse cx="15.5" cy="14.5" rx="5.8" ry="4.8" fill="#fff" stroke="#09b83e" stroke-width="1"/><path d="M18 18L20 20L16.5 18.8Z" fill="#fff"/><circle cx="7.3" cy="8" r=".9" fill="#09b83e"/><circle cx="11.5" cy="8" r=".9" fill="#09b83e"/><circle cx="13.5" cy="13.5" r=".8" fill="#09b83e"/><circle cx="17.5" cy="13.5" r=".8" fill="#09b83e"/></svg>
<svg class="a" style="left:307px;top:736px" width="24" height="24" viewBox="0 0 24 24"><defs><linearGradient id="gg" x1="0" y1="0" x2="0" y2="1"><stop offset="0" stop-color="#4d7aa6"/><stop offset="1" stop-color="#1c3f6a"/></linearGradient></defs><rect x="0.5" y="0.5" width="21" height="22" rx="3" fill="url(#gg)"/><g fill="#fff"><rect x="8" y="3.5" width="4" height="4"/><rect x="13.5" y="3.5" width="4" height="4"/><rect x="3" y="9" width="4" height="4"/><rect x="8" y="9" width="4" height="4"/><rect x="13.5" y="9" width="4" height="4"/><rect x="3" y="14.5" width="4" height="4"/><rect x="8" y="14.5" width="4" height="4"/></g><circle cx="18.5" cy="18.5" r="5" fill="#c4151c"/><text x="18.5" y="21.2" font-size="7" fill="#fff" text-anchor="middle" font-family="Liberation Sans" font-weight="bold">12</text></svg>
<svg class="a" style="left:356px;top:739px" width="22" height="18" viewBox="0 0 22 18"><path d="M0.5 2V16.5H21.5V3.5H10L8 1H1.5Z" fill="#f4c542"/><path d="M0.5 4H21.5V16.5H0.5Z" fill="#f8d775"/><path d="M0.5 1.5H8L10 3.5H0.5Z" fill="#e2a72e"/><path d="M4.5 17V10.5H17.5V17H14V13.5H8V17Z" fill="#1e7fd8"/></svg>
<div class="a" style="left:392px;top:728px;width:48px;height:40px;background:#e9eef4"></div>
<div class="a" style="left:392px;top:766px;width:48px;height:2px;background:#1f5fcf"></div>
<svg class="a" style="left:403px;top:736px" width="25" height="25" viewBox="0 0 24 24"><defs><linearGradient id="ge" x1="0" y1="0" x2="1" y2="1"><stop offset="0" stop-color="#35c1f1"/><stop offset=".6" stop-color="#3dbb8f"/><stop offset="1" stop-color="#7fd54e"/></linearGradient></defs><circle cx="12" cy="12" r="11.5" fill="#1e6fd0"/><path d="M0.8 11 A11.5 11.5 0 0 1 23.5 12.5 C23.5 16 20 17.5 16.5 17 C13 16.5 12 14 15 12.5 C13 9 8 8 5 10 C3 11.5 2 13 1.5 15 C1 13.5 0.8 12 0.8 11Z" fill="url(#ge)"/><path d="M1.5 15 C2 10.5 7 7.5 11.5 9 C8 10 6.5 13 7.5 16.5 C8.5 20 13 22.5 17 21.5 C14 23.5 8 24 4.5 20 C2.5 18 1.5 16.5 1.5 15Z" fill="#0d4aa8"/></svg>
<svg class="a" style="left:985px;top:736px" width="27" height="24" viewBox="0 0 27 24"><path d="M11 2 A6 6 0 0 0 13 12 A6 6 0 0 1 4 9 A6 6 0 0 1 11 2Z" fill="#f4a623"/><path d="M6 22 C2 22 1 19.5 1.5 17.5 C2 15.5 4 14.5 5.5 15 C6 11.5 9 9.5 12.5 10 C15.5 10.5 17 12.5 17.5 14 C20 13 23.5 14 25 16.5 C26.5 19.5 24.5 22 21 22Z" fill="#a9d3f2"/><path d="M6 22 C2 22 1 19.5 1.5 17.5 C7 19 18 19 25.8 18.5 C26 20.5 24.5 22 21 22Z" fill="#7fb8e6"/></svg>
<div class="a" style="left:1019px;top:739px;font-size:15px;line-height:18px;color:#111">21°C</div>
<div class="a" style="left:1059px;top:739px;font-size:14px;line-height:18px;color:#111">多云</div>
<svg class="a" style="left:1103px;top:742px" width="14" height="9" viewBox="0 0 14 9"><path d="M1 8L7 1.5L13 8" fill="none" stroke="#111" stroke-width="1.3"/></svg>
<svg class="a" style="left:1127px;top:740px" width="16" height="16" viewBox="0 0 16 16"><path d="M1.5 14.5A13 13 0 0 1 14.5 1.5 M4.5 14.5A10 10 0 0 1 14.5 4.5 M7.5 14.5A7 7 0 0 1 14.5 7.5 M10.5 14.5A4 4 0 0 1 14.5 10.5" fill="none" stroke="#111" stroke-width="1"/><circle cx="13.5" cy="13.5" r="1.6" fill="#111"/></svg>
<svg class="a" style="left:1149px;top:741px" width="18" height="13" viewBox="0 0 18 13"><path d="M4.5 12 C1.5 12 0.8 10 1 8.5 C1.3 7 2.5 6 4 6.2 C4.5 3 7 1 10 1.2 C13 1.5 14.5 3.5 14.8 5.8 C16.5 6 17.2 7.5 17.2 9 C17.2 10.8 16 12 14 12Z" fill="#bdbdbd" stroke="#111" stroke-width="1"/></svg>
<svg class="a" style="left:1175px;top:742px" width="16" height="11" viewBox="0 0 16 11"><rect x="0.7" y="1" width="13" height="9" rx="1" fill="none" stroke="#111" stroke-width="1.2"/><rect x="2.5" y="2.8" width="8" height="5.4" fill="#111"/><rect x="14" y="3.5" width="1.8" height="4" fill="#111"/></svg>
<svg class="a" style="left:1197px;top:740px" width="18" height="16" viewBox="0 0 18 16"><path d="M1 5.5H4.5L9 1.5V14.5L4.5 10.5H1Z" fill="none" stroke="#111" stroke-width="1.25" stroke-linejoin="round"/><path d="M11.5 5.5Q13 8 11.5 10.5 M14 3.5Q17 8 14 12.5" fill="none" stroke="#111" stroke-width="1.25"/></svg>
<div class="a" style="left:1220px;top:738px;font-size:16px;line-height:20px;color:#111">英</div>
<div class="a" style="left:1260px;top:732px;width:33px;font-size:12px;line-height:15px;color:#111;letter-spacing:0.2px">18:20</div>
<div class="a" style="left:1247px;top:751px;font-size:12px;line-height:15px;color:#111;letter-spacing:0.7px">2023/3/18</div>
<div class="a" style="left:1361px;top:728px;width:1px;height:40px;background:#bcc4cc"></div><svg class="a" style="left:1324px;top:740px" width="18" height="17" viewBox="0 0 18 17"><path d="M1 1H17V12H9L5.5 15.5V12H1Z" fill="none" stroke="#111" stroke-width="1.2" stroke-linejoin="round"/></svg>

</body></html>
